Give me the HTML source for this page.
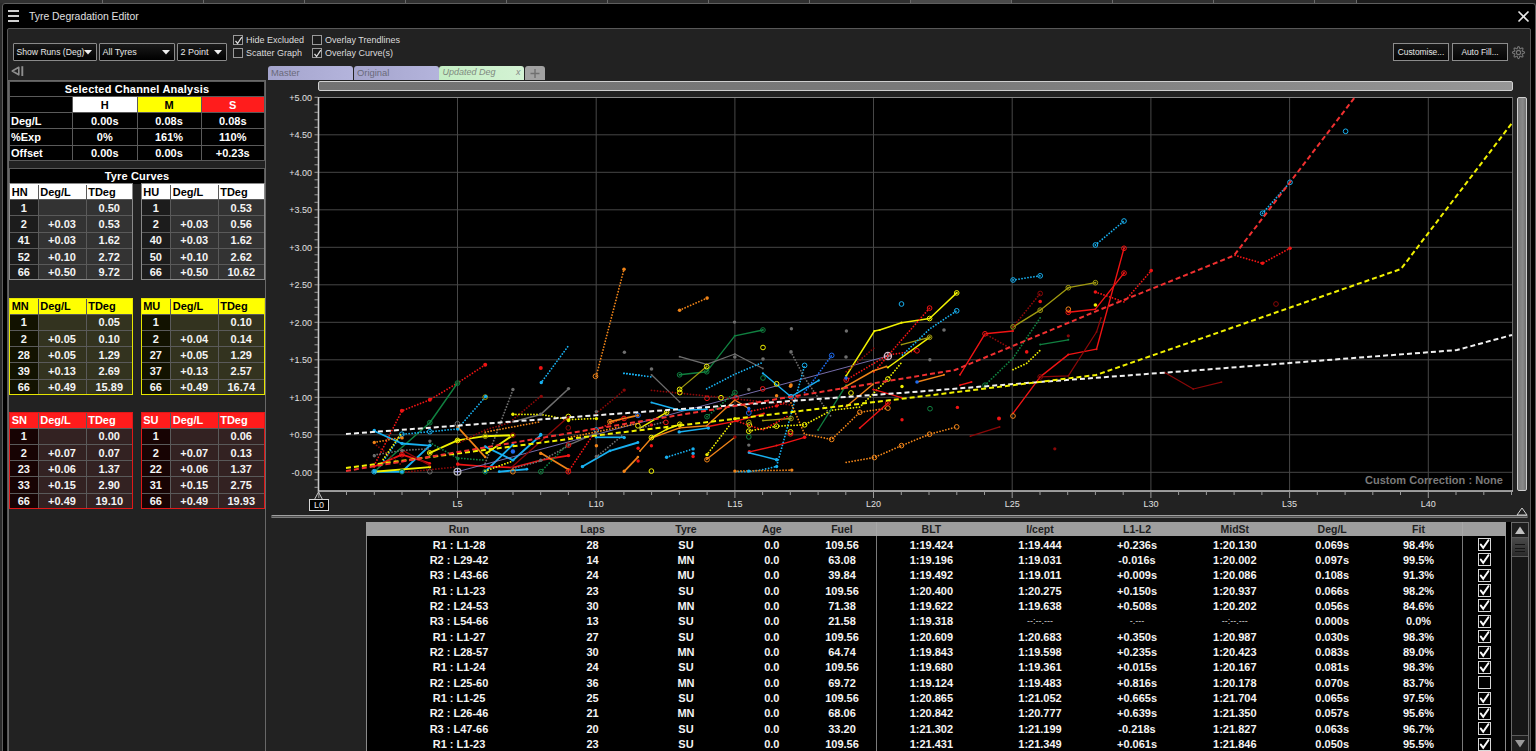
<!DOCTYPE html><html><head><meta charset="utf-8"><style>
*{box-sizing:border-box}
html,body{margin:0;padding:0;width:1536px;height:751px;overflow:hidden;background:#000;font-family:"Liberation Sans",sans-serif}
.ab{position:absolute}
.t{position:absolute;white-space:pre;line-height:1}
</style></head><body>
<div class="ab" style="left:0;top:0;width:1536px;height:751px;background:#2a2a2a"></div>
<div class="ab" style="left:0;top:0;width:1536px;height:3px;background:#303030"></div>
<div class="ab" style="left:102px;top:0;width:1px;height:3px;background:#6a6a6a"></div>
<div class="ab" style="left:203px;top:0;width:1px;height:3px;background:#6a6a6a"></div>
<div class="ab" style="left:304px;top:0;width:1px;height:3px;background:#6a6a6a"></div>
<div class="ab" style="left:405px;top:0;width:1px;height:3px;background:#6a6a6a"></div>
<div class="ab" style="left:506px;top:0;width:1px;height:3px;background:#6a6a6a"></div>
<div class="ab" style="left:607px;top:0;width:1px;height:3px;background:#6a6a6a"></div>
<div class="ab" style="left:708px;top:0;width:1px;height:3px;background:#6a6a6a"></div>
<div class="ab" style="left:809px;top:0;width:1px;height:3px;background:#6a6a6a"></div>
<div class="ab" style="left:910px;top:0;width:1px;height:3px;background:#6a6a6a"></div>
<div class="ab" style="left:1011px;top:0;width:1px;height:3px;background:#6a6a6a"></div>
<div class="ab" style="left:1112px;top:0;width:1px;height:3px;background:#6a6a6a"></div>
<div class="ab" style="left:1213px;top:0;width:1px;height:3px;background:#6a6a6a"></div>
<div class="ab" style="left:1314px;top:0;width:1px;height:3px;background:#6a6a6a"></div>
<div class="ab" style="left:1356px;top:0;width:1px;height:3px;background:#6a6a6a"></div>
<div class="ab" style="left:911px;top:0;width:100px;height:2.5px;background:#4a4a4a"></div>
<div class="ab" style="left:1357px;top:0;width:179px;height:2.5px;background:#1c1c1c"></div>
<div class="ab" style="left:1.5px;top:2.5px;width:1534px;height:760px;background:#000;border:1px solid #5e5e5e;border-radius:3px"></div>
<div class="ab" style="left:8px;top:10px;width:11px;height:2px;background:#d0d0d0"></div>
<div class="ab" style="left:8px;top:15px;width:11px;height:2px;background:#d0d0d0"></div>
<div class="ab" style="left:8px;top:20px;width:11px;height:2px;background:#d0d0d0"></div>
<div class="t" style="left:29px;top:12px;font-size:10.4px;color:#e0e0e0">Tyre Degradation Editor</div>
<svg class="ab" style="left:1517px;top:9.5px" width="13" height="13"><path d="M1.5 1.5L11.5 11.5M11.5 1.5L1.5 11.5" stroke="#e8e8e8" stroke-width="1.6"/></svg>
<div class="ab" style="left:7px;top:28px;width:1524px;height:730px;background:#222;border:1px solid #585858;border-radius:2px"></div>
<div class="ab" style="left:13px;top:43px;width:84px;height:18px;background:linear-gradient(#1a1a1a,#000);border:1px solid #8a8a8a;border-radius:1px"></div>
<div class="t" style="left:16.5px;top:47.5px;font-size:8.6px;color:#e6e6e6">Show Runs (Deg)</div>
<svg class="ab" style="left:84px;top:50px" width="8" height="5"><path d="M0 0H8L4 4.5Z" fill="#f0f0f0"/></svg>
<div class="ab" style="left:99px;top:43px;width:76px;height:18px;background:linear-gradient(#1a1a1a,#000);border:1px solid #8a8a8a;border-radius:1px"></div>
<div class="t" style="left:102.5px;top:47.5px;font-size:9px;color:#e6e6e6">All Tyres</div>
<svg class="ab" style="left:162px;top:50px" width="8" height="5"><path d="M0 0H8L4 4.5Z" fill="#f0f0f0"/></svg>
<div class="ab" style="left:177px;top:43px;width:50px;height:18px;background:linear-gradient(#1a1a1a,#000);border:1px solid #8a8a8a;border-radius:1px"></div>
<div class="t" style="left:180.5px;top:47.5px;font-size:9px;color:#e6e6e6">2 Point</div>
<svg class="ab" style="left:214px;top:50px" width="8" height="5"><path d="M0 0H8L4 4.5Z" fill="#f0f0f0"/></svg>
<div class="ab" style="left:233px;top:35px;width:10px;height:10px;border:1px solid #9a9a9a;background:#1c1c1c"></div>
<svg class="ab" style="left:234px;top:36px" width="9" height="9"><path d="M1.5 4.8L3.6 7.5L7.8 1.2" stroke="#dcdcdc" stroke-width="1.3" fill="none"/></svg>
<div class="t" style="left:246px;top:36px;font-size:9px;color:#dcdcdc">Hide Excluded</div>
<div class="ab" style="left:233px;top:48px;width:10px;height:10px;border:1px solid #9a9a9a;background:#1c1c1c"></div>
<div class="t" style="left:246px;top:49px;font-size:9px;color:#dcdcdc">Scatter Graph</div>
<div class="ab" style="left:312px;top:35px;width:10px;height:10px;border:1px solid #9a9a9a;background:#1c1c1c"></div>
<div class="t" style="left:325px;top:36px;font-size:9px;color:#dcdcdc">Overlay Trendlines</div>
<div class="ab" style="left:312px;top:48px;width:10px;height:10px;border:1px solid #9a9a9a;background:#1c1c1c"></div>
<svg class="ab" style="left:313px;top:49px" width="9" height="9"><path d="M1.5 4.8L3.6 7.5L7.8 1.2" stroke="#dcdcdc" stroke-width="1.3" fill="none"/></svg>
<div class="t" style="left:325px;top:49px;font-size:9px;color:#dcdcdc">Overlay Curve(s)</div>
<svg class="ab" style="left:10px;top:65px" width="14" height="12"><path d="M8.8 2.2L2.3 6L8.8 9.8Z" fill="none" stroke="#8e8e8e" stroke-width="1.6" stroke-linejoin="round"/><path d="M12.3 1.2V11" stroke="#8e8e8e" stroke-width="1.9"/></svg>
<div class="ab" style="left:1393px;top:43px;width:56px;height:18px;background:linear-gradient(#181818,#050505);border:1px solid #8c8c8c"></div>
<div class="t" style="left:1393px;width:56px;text-align:center;top:47.5px;font-size:8.4px;color:#e6e6e6">Customise...</div>
<div class="ab" style="left:1452px;top:43px;width:56px;height:18px;background:linear-gradient(#181818,#050505);border:1px solid #8c8c8c"></div>
<div class="t" style="left:1452px;width:56px;text-align:center;top:47.5px;font-size:8.4px;color:#e6e6e6">Auto Fill...</div>
<svg class="ab" style="left:1510.5px;top:44.7px" width="15" height="15" viewBox="0 0 15 15"><g fill="none" stroke="#767676" stroke-width="1.1"><circle cx="7.5" cy="7.5" r="2.1"/><polyline points="7.50,1.45 7.89,1.60 8.22,2.02 8.48,2.60 8.66,3.18 8.81,3.63 9.01,3.85 9.31,3.83 9.74,3.62 10.28,3.34 10.86,3.12 11.40,3.06 11.78,3.22 11.94,3.60 11.88,4.14 11.66,4.72 11.38,5.26 11.17,5.69 11.15,5.99 11.37,6.19 11.82,6.34 12.40,6.52 12.98,6.78 13.40,7.11 13.55,7.50 13.40,7.89 12.98,8.22 12.40,8.48 11.82,8.66 11.37,8.81 11.15,9.01 11.17,9.31 11.38,9.74 11.66,10.28 11.88,10.86 11.94,11.40 11.78,11.78 11.40,11.94 10.86,11.88 10.28,11.66 9.74,11.38 9.31,11.17 9.01,11.15 8.81,11.37 8.66,11.82 8.48,12.40 8.22,12.98 7.89,13.40 7.50,13.55 7.11,13.40 6.78,12.98 6.52,12.40 6.34,11.82 6.19,11.37 5.99,11.15 5.69,11.17 5.26,11.38 4.72,11.66 4.14,11.88 3.60,11.94 3.22,11.78 3.06,11.40 3.12,10.86 3.34,10.28 3.62,9.74 3.83,9.31 3.85,9.01 3.63,8.81 3.18,8.66 2.60,8.48 2.02,8.22 1.60,7.89 1.45,7.50 1.60,7.11 2.02,6.78 2.60,6.52 3.18,6.34 3.63,6.19 3.85,5.99 3.83,5.69 3.62,5.26 3.34,4.72 3.12,4.14 3.06,3.60 3.22,3.22 3.60,3.06 4.14,3.12 4.72,3.34 5.26,3.62 5.69,3.83 5.99,3.85 6.19,3.63 6.34,3.18 6.52,2.60 6.78,2.02 7.11,1.60 7.50,1.45"/></g></svg>
<div class="ab" style="left:267.5px;top:65.5px;width:85.0px;height:14px;background:linear-gradient(90deg,#a4a4cc,#b4b4dc);border-radius:3px 3px 0 0"></div>
<div class="t" style="left:271.0px;top:67.5px;font-size:9.4px;color:#6a6a7a;">Master</div>
<div class="ab" style="left:353.5px;top:65.5px;width:85.0px;height:14px;background:linear-gradient(90deg,#a4a4cc,#b4b4dc);border-radius:3px 3px 0 0"></div>
<div class="t" style="left:357.0px;top:67.5px;font-size:9.4px;color:#6a6a7a;">Original</div>
<div class="ab" style="left:439px;top:65.5px;width:85px;height:14px;background:linear-gradient(90deg,#c4eec4,#d4f2d4);border-radius:3px 3px 0 0"></div>
<div class="t" style="left:442.5px;top:67.5px;font-size:9px;color:#808a80;font-style:italic;">Updated Deg</div>
<div class="t" style="left:516px;top:68px;font-size:9px;color:#888;font-style:italic">x</div>
<div class="ab" style="left:525px;top:65.5px;width:20px;height:14px;background:#a2a2a2;border-radius:3px 3px 0 0"></div>
<svg class="ab" style="left:529px;top:67px" width="12" height="12"><path d="M6 2V11M1.5 6.5H10.5" stroke="#707070" stroke-width="1.4"/></svg>
<div class="ab" style="left:318px;top:81px;width:1195px;height:10px;background:linear-gradient(90deg,#727272,#7a7a7a 55%,#969696);border:1px solid #d0d0d0;border-radius:2px"></div>
<div class="ab" style="left:8px;top:80px;width:258px;height:675px;border:1px solid #686868;background:#222"></div>
<div class="ab" style="left:9px;top:81px;width:256px;height:80px;background:#000;border:1px solid #5a5a5a"></div>
<div class="t" style="left:9px;width:256px;text-align:center;top:83.5px;font-size:11px;font-weight:bold;color:#fff;letter-spacing:0.2px">Selected Channel Analysis</div>
<div class="ab" style="left:9px;top:96px;width:64px;height:17px;background:#000;border:1px solid #5a5a5a"></div>
<div class="ab" style="left:72px;top:96px;width:65.5px;height:17px;background:#fff;border:1px solid #5a5a5a"></div>
<div class="t" style="left:72px;width:65.5px;text-align:center;top:99.8px;font-size:11px;font-weight:bold;color:#000;letter-spacing:0px">H</div>
<div class="ab" style="left:136.5px;top:96px;width:65.0px;height:17px;background:#ffff00;border:1px solid #5a5a5a"></div>
<div class="t" style="left:136.5px;width:65.0px;text-align:center;top:99.8px;font-size:11px;font-weight:bold;color:#000;letter-spacing:0px">M</div>
<div class="ab" style="left:200.5px;top:96px;width:64.5px;height:17px;background:#ff1c1c;border:1px solid #5a5a5a"></div>
<div class="t" style="left:200.5px;width:64.5px;text-align:center;top:99.8px;font-size:11px;font-weight:bold;color:#fff;letter-spacing:0px">S</div>
<div class="ab" style="left:9px;top:112px;width:64px;height:17px;background:#000;border:1px solid #5a5a5a"></div>
<div class="t" style="left:11px;top:115.8px;font-size:11px;font-weight:bold;color:#fff;letter-spacing:0px">Deg/L</div>
<div class="ab" style="left:72px;top:112px;width:65.5px;height:17px;background:#000;border:1px solid #5a5a5a"></div>
<div class="t" style="left:72px;width:65.5px;text-align:center;top:115.8px;font-size:11px;font-weight:bold;color:#fff;letter-spacing:0px">0.00s</div>
<div class="ab" style="left:136.5px;top:112px;width:65.0px;height:17px;background:#000;border:1px solid #5a5a5a"></div>
<div class="t" style="left:136.5px;width:65.0px;text-align:center;top:115.8px;font-size:11px;font-weight:bold;color:#fff;letter-spacing:0px">0.08s</div>
<div class="ab" style="left:200.5px;top:112px;width:64.5px;height:17px;background:#000;border:1px solid #5a5a5a"></div>
<div class="t" style="left:200.5px;width:64.5px;text-align:center;top:115.8px;font-size:11px;font-weight:bold;color:#fff;letter-spacing:0px">0.08s</div>
<div class="ab" style="left:9px;top:128px;width:64px;height:17.5px;background:#000;border:1px solid #5a5a5a"></div>
<div class="t" style="left:11px;top:132.05px;font-size:11px;font-weight:bold;color:#fff;letter-spacing:0px">%Exp</div>
<div class="ab" style="left:72px;top:128px;width:65.5px;height:17.5px;background:#000;border:1px solid #5a5a5a"></div>
<div class="t" style="left:72px;width:65.5px;text-align:center;top:132.05px;font-size:11px;font-weight:bold;color:#fff;letter-spacing:0px">0%</div>
<div class="ab" style="left:136.5px;top:128px;width:65.0px;height:17.5px;background:#000;border:1px solid #5a5a5a"></div>
<div class="t" style="left:136.5px;width:65.0px;text-align:center;top:132.05px;font-size:11px;font-weight:bold;color:#fff;letter-spacing:0px">161%</div>
<div class="ab" style="left:200.5px;top:128px;width:64.5px;height:17.5px;background:#000;border:1px solid #5a5a5a"></div>
<div class="t" style="left:200.5px;width:64.5px;text-align:center;top:132.05px;font-size:11px;font-weight:bold;color:#fff;letter-spacing:0px">110%</div>
<div class="ab" style="left:9px;top:144.5px;width:64px;height:16.5px;background:#000;border:1px solid #5a5a5a"></div>
<div class="t" style="left:11px;top:148.05px;font-size:11px;font-weight:bold;color:#fff;letter-spacing:0px">Offset</div>
<div class="ab" style="left:72px;top:144.5px;width:65.5px;height:16.5px;background:#000;border:1px solid #5a5a5a"></div>
<div class="t" style="left:72px;width:65.5px;text-align:center;top:148.05px;font-size:11px;font-weight:bold;color:#fff;letter-spacing:0px">0.00s</div>
<div class="ab" style="left:136.5px;top:144.5px;width:65.0px;height:16.5px;background:#000;border:1px solid #5a5a5a"></div>
<div class="t" style="left:136.5px;width:65.0px;text-align:center;top:148.05px;font-size:11px;font-weight:bold;color:#fff;letter-spacing:0px">0.00s</div>
<div class="ab" style="left:200.5px;top:144.5px;width:64.5px;height:16.5px;background:#000;border:1px solid #5a5a5a"></div>
<div class="t" style="left:200.5px;width:64.5px;text-align:center;top:148.05px;font-size:11px;font-weight:bold;color:#fff;letter-spacing:0px">+0.23s</div>
<div class="ab" style="left:9px;top:168px;width:256px;height:15.5px;background:#000;border:1px solid #5a5a5a;border-bottom:none"></div>
<div class="t" style="left:9px;width:256px;text-align:center;top:170.8px;font-size:11px;font-weight:bold;color:#fff;letter-spacing:0.15px">Tyre Curves</div>
<div class="ab" style="left:9px;top:183.8px;width:29.5px;height:17.0px;background:#fff;border:1px solid #5a5a5a"></div>
<div class="t" style="left:11.7px;top:186.8px;font-size:11px;font-weight:bold;color:#000;letter-spacing:0px">HN</div>
<div class="ab" style="left:9px;top:183px;width:29.5px;height:1.5px;background:#fff"></div>
<div class="ab" style="left:37.5px;top:183.8px;width:49.0px;height:17.0px;background:#fff;border:1px solid #5a5a5a"></div>
<div class="t" style="left:40.2px;top:186.8px;font-size:11px;font-weight:bold;color:#000;letter-spacing:0px">Deg/L</div>
<div class="ab" style="left:37.5px;top:183px;width:49.0px;height:1.5px;background:#fff"></div>
<div class="ab" style="left:85.5px;top:183.8px;width:47.5px;height:17.0px;background:#fff;border:1px solid #5a5a5a"></div>
<div class="t" style="left:88.2px;top:186.8px;font-size:11px;font-weight:bold;color:#000;letter-spacing:0px">TDeg</div>
<div class="ab" style="left:85.5px;top:183px;width:47.5px;height:1.5px;background:#fff"></div>
<div class="ab" style="left:9px;top:199.0px;width:29.5px;height:17.25px;background:#1c1c1c;border:1px solid #5a5a5a"></div>
<div class="t" style="left:9px;width:29.5px;text-align:center;top:202.925px;font-size:11px;font-weight:bold;color:#f4f4f4;letter-spacing:0px">1</div>
<div class="ab" style="left:37.5px;top:199.0px;width:49.0px;height:17.25px;background:#333;border:1px solid #5a5a5a"></div>
<div class="ab" style="left:85.5px;top:199.0px;width:47.5px;height:17.25px;background:#333;border:1px solid #5a5a5a"></div>
<div class="t" style="left:85.5px;width:47.5px;text-align:center;top:202.925px;font-size:11px;font-weight:bold;color:#f4f4f4;letter-spacing:0px">0.50</div>
<div class="ab" style="left:9px;top:215.25px;width:29.5px;height:17.25px;background:#1c1c1c;border:1px solid #5a5a5a"></div>
<div class="t" style="left:9px;width:29.5px;text-align:center;top:219.175px;font-size:11px;font-weight:bold;color:#f4f4f4;letter-spacing:0px">2</div>
<div class="ab" style="left:37.5px;top:215.25px;width:49.0px;height:17.25px;background:#333;border:1px solid #5a5a5a"></div>
<div class="t" style="left:37.5px;width:49.0px;text-align:center;top:219.175px;font-size:11px;font-weight:bold;color:#f4f4f4;letter-spacing:0px">+0.03</div>
<div class="ab" style="left:85.5px;top:215.25px;width:47.5px;height:17.25px;background:#333;border:1px solid #5a5a5a"></div>
<div class="t" style="left:85.5px;width:47.5px;text-align:center;top:219.175px;font-size:11px;font-weight:bold;color:#f4f4f4;letter-spacing:0px">0.53</div>
<div class="ab" style="left:9px;top:231.5px;width:29.5px;height:17.25px;background:#1c1c1c;border:1px solid #5a5a5a"></div>
<div class="t" style="left:9px;width:29.5px;text-align:center;top:235.425px;font-size:11px;font-weight:bold;color:#f4f4f4;letter-spacing:0px">41</div>
<div class="ab" style="left:37.5px;top:231.5px;width:49.0px;height:17.25px;background:#333;border:1px solid #5a5a5a"></div>
<div class="t" style="left:37.5px;width:49.0px;text-align:center;top:235.425px;font-size:11px;font-weight:bold;color:#f4f4f4;letter-spacing:0px">+0.03</div>
<div class="ab" style="left:85.5px;top:231.5px;width:47.5px;height:17.25px;background:#333;border:1px solid #5a5a5a"></div>
<div class="t" style="left:85.5px;width:47.5px;text-align:center;top:235.425px;font-size:11px;font-weight:bold;color:#f4f4f4;letter-spacing:0px">1.62</div>
<div class="ab" style="left:9px;top:247.75px;width:29.5px;height:17.25px;background:#1c1c1c;border:1px solid #5a5a5a"></div>
<div class="t" style="left:9px;width:29.5px;text-align:center;top:251.675px;font-size:11px;font-weight:bold;color:#f4f4f4;letter-spacing:0px">52</div>
<div class="ab" style="left:37.5px;top:247.75px;width:49.0px;height:17.25px;background:#333;border:1px solid #5a5a5a"></div>
<div class="t" style="left:37.5px;width:49.0px;text-align:center;top:251.675px;font-size:11px;font-weight:bold;color:#f4f4f4;letter-spacing:0px">+0.10</div>
<div class="ab" style="left:85.5px;top:247.75px;width:47.5px;height:17.25px;background:#333;border:1px solid #5a5a5a"></div>
<div class="t" style="left:85.5px;width:47.5px;text-align:center;top:251.675px;font-size:11px;font-weight:bold;color:#f4f4f4;letter-spacing:0px">2.72</div>
<div class="ab" style="left:9px;top:264.0px;width:29.5px;height:16.25px;background:#1c1c1c;border:1px solid #5a5a5a"></div>
<div class="t" style="left:9px;width:29.5px;text-align:center;top:267.425px;font-size:11px;font-weight:bold;color:#f4f4f4;letter-spacing:0px">66</div>
<div class="ab" style="left:37.5px;top:264.0px;width:49.0px;height:16.25px;background:#333;border:1px solid #5a5a5a"></div>
<div class="t" style="left:37.5px;width:49.0px;text-align:center;top:267.425px;font-size:11px;font-weight:bold;color:#f4f4f4;letter-spacing:0px">+0.50</div>
<div class="ab" style="left:85.5px;top:264.0px;width:47.5px;height:16.25px;background:#333;border:1px solid #5a5a5a"></div>
<div class="t" style="left:85.5px;width:47.5px;text-align:center;top:267.425px;font-size:11px;font-weight:bold;color:#f4f4f4;letter-spacing:0px">9.72</div>
<div class="ab" style="left:9px;top:183px;width:124px;height:97.25px;border:1px solid #8a8a8a"></div>
<div class="ab" style="left:140.5px;top:183.8px;width:30.5px;height:17.0px;background:#fff;border:1px solid #5a5a5a"></div>
<div class="t" style="left:143.2px;top:186.8px;font-size:11px;font-weight:bold;color:#000;letter-spacing:0px">HU</div>
<div class="ab" style="left:140.5px;top:183px;width:30.5px;height:1.5px;background:#fff"></div>
<div class="ab" style="left:170px;top:183.8px;width:48.5px;height:17.0px;background:#fff;border:1px solid #5a5a5a"></div>
<div class="t" style="left:172.7px;top:186.8px;font-size:11px;font-weight:bold;color:#000;letter-spacing:0px">Deg/L</div>
<div class="ab" style="left:170px;top:183px;width:48.5px;height:1.5px;background:#fff"></div>
<div class="ab" style="left:217.5px;top:183.8px;width:47.5px;height:17.0px;background:#fff;border:1px solid #5a5a5a"></div>
<div class="t" style="left:220.2px;top:186.8px;font-size:11px;font-weight:bold;color:#000;letter-spacing:0px">TDeg</div>
<div class="ab" style="left:217.5px;top:183px;width:47.5px;height:1.5px;background:#fff"></div>
<div class="ab" style="left:140.5px;top:199.0px;width:30.5px;height:17.25px;background:#1c1c1c;border:1px solid #5a5a5a"></div>
<div class="t" style="left:140.5px;width:30.5px;text-align:center;top:202.925px;font-size:11px;font-weight:bold;color:#f4f4f4;letter-spacing:0px">1</div>
<div class="ab" style="left:170px;top:199.0px;width:48.5px;height:17.25px;background:#333;border:1px solid #5a5a5a"></div>
<div class="ab" style="left:217.5px;top:199.0px;width:47.5px;height:17.25px;background:#333;border:1px solid #5a5a5a"></div>
<div class="t" style="left:217.5px;width:47.5px;text-align:center;top:202.925px;font-size:11px;font-weight:bold;color:#f4f4f4;letter-spacing:0px">0.53</div>
<div class="ab" style="left:140.5px;top:215.25px;width:30.5px;height:17.25px;background:#1c1c1c;border:1px solid #5a5a5a"></div>
<div class="t" style="left:140.5px;width:30.5px;text-align:center;top:219.175px;font-size:11px;font-weight:bold;color:#f4f4f4;letter-spacing:0px">2</div>
<div class="ab" style="left:170px;top:215.25px;width:48.5px;height:17.25px;background:#333;border:1px solid #5a5a5a"></div>
<div class="t" style="left:170px;width:48.5px;text-align:center;top:219.175px;font-size:11px;font-weight:bold;color:#f4f4f4;letter-spacing:0px">+0.03</div>
<div class="ab" style="left:217.5px;top:215.25px;width:47.5px;height:17.25px;background:#333;border:1px solid #5a5a5a"></div>
<div class="t" style="left:217.5px;width:47.5px;text-align:center;top:219.175px;font-size:11px;font-weight:bold;color:#f4f4f4;letter-spacing:0px">0.56</div>
<div class="ab" style="left:140.5px;top:231.5px;width:30.5px;height:17.25px;background:#1c1c1c;border:1px solid #5a5a5a"></div>
<div class="t" style="left:140.5px;width:30.5px;text-align:center;top:235.425px;font-size:11px;font-weight:bold;color:#f4f4f4;letter-spacing:0px">40</div>
<div class="ab" style="left:170px;top:231.5px;width:48.5px;height:17.25px;background:#333;border:1px solid #5a5a5a"></div>
<div class="t" style="left:170px;width:48.5px;text-align:center;top:235.425px;font-size:11px;font-weight:bold;color:#f4f4f4;letter-spacing:0px">+0.03</div>
<div class="ab" style="left:217.5px;top:231.5px;width:47.5px;height:17.25px;background:#333;border:1px solid #5a5a5a"></div>
<div class="t" style="left:217.5px;width:47.5px;text-align:center;top:235.425px;font-size:11px;font-weight:bold;color:#f4f4f4;letter-spacing:0px">1.62</div>
<div class="ab" style="left:140.5px;top:247.75px;width:30.5px;height:17.25px;background:#1c1c1c;border:1px solid #5a5a5a"></div>
<div class="t" style="left:140.5px;width:30.5px;text-align:center;top:251.675px;font-size:11px;font-weight:bold;color:#f4f4f4;letter-spacing:0px">50</div>
<div class="ab" style="left:170px;top:247.75px;width:48.5px;height:17.25px;background:#333;border:1px solid #5a5a5a"></div>
<div class="t" style="left:170px;width:48.5px;text-align:center;top:251.675px;font-size:11px;font-weight:bold;color:#f4f4f4;letter-spacing:0px">+0.10</div>
<div class="ab" style="left:217.5px;top:247.75px;width:47.5px;height:17.25px;background:#333;border:1px solid #5a5a5a"></div>
<div class="t" style="left:217.5px;width:47.5px;text-align:center;top:251.675px;font-size:11px;font-weight:bold;color:#f4f4f4;letter-spacing:0px">2.62</div>
<div class="ab" style="left:140.5px;top:264.0px;width:30.5px;height:16.25px;background:#1c1c1c;border:1px solid #5a5a5a"></div>
<div class="t" style="left:140.5px;width:30.5px;text-align:center;top:267.425px;font-size:11px;font-weight:bold;color:#f4f4f4;letter-spacing:0px">66</div>
<div class="ab" style="left:170px;top:264.0px;width:48.5px;height:16.25px;background:#333;border:1px solid #5a5a5a"></div>
<div class="t" style="left:170px;width:48.5px;text-align:center;top:267.425px;font-size:11px;font-weight:bold;color:#f4f4f4;letter-spacing:0px">+0.50</div>
<div class="ab" style="left:217.5px;top:264.0px;width:47.5px;height:16.25px;background:#333;border:1px solid #5a5a5a"></div>
<div class="t" style="left:217.5px;width:47.5px;text-align:center;top:267.425px;font-size:11px;font-weight:bold;color:#f4f4f4;letter-spacing:0px">10.62</div>
<div class="ab" style="left:140.5px;top:183px;width:124.5px;height:97.25px;border:1px solid #8a8a8a"></div>
<div class="ab" style="left:9px;top:298.3px;width:29.5px;height:17.0px;background:#ffff00;border:1px solid #5a5a5a"></div>
<div class="t" style="left:11.7px;top:301.3px;font-size:11px;font-weight:bold;color:#000;letter-spacing:0px">MN</div>
<div class="ab" style="left:9px;top:297.5px;width:29.5px;height:1.5px;background:#ffff00"></div>
<div class="ab" style="left:37.5px;top:298.3px;width:49.0px;height:17.0px;background:#ffff00;border:1px solid #5a5a5a"></div>
<div class="t" style="left:40.2px;top:301.3px;font-size:11px;font-weight:bold;color:#000;letter-spacing:0px">Deg/L</div>
<div class="ab" style="left:37.5px;top:297.5px;width:49.0px;height:1.5px;background:#ffff00"></div>
<div class="ab" style="left:85.5px;top:298.3px;width:47.5px;height:17.0px;background:#ffff00;border:1px solid #5a5a5a"></div>
<div class="t" style="left:88.2px;top:301.3px;font-size:11px;font-weight:bold;color:#000;letter-spacing:0px">TDeg</div>
<div class="ab" style="left:85.5px;top:297.5px;width:47.5px;height:1.5px;background:#ffff00"></div>
<div class="ab" style="left:9px;top:313.5px;width:29.5px;height:17.25px;background:#121200;border:1px solid #5a5a5a"></div>
<div class="t" style="left:9px;width:29.5px;text-align:center;top:317.425px;font-size:11px;font-weight:bold;color:#f4f4f4;letter-spacing:0px">1</div>
<div class="ab" style="left:37.5px;top:313.5px;width:49.0px;height:17.25px;background:#33331f;border:1px solid #5a5a5a"></div>
<div class="ab" style="left:85.5px;top:313.5px;width:47.5px;height:17.25px;background:#33331f;border:1px solid #5a5a5a"></div>
<div class="t" style="left:85.5px;width:47.5px;text-align:center;top:317.425px;font-size:11px;font-weight:bold;color:#f4f4f4;letter-spacing:0px">0.05</div>
<div class="ab" style="left:9px;top:329.75px;width:29.5px;height:17.25px;background:#121200;border:1px solid #5a5a5a"></div>
<div class="t" style="left:9px;width:29.5px;text-align:center;top:333.675px;font-size:11px;font-weight:bold;color:#f4f4f4;letter-spacing:0px">2</div>
<div class="ab" style="left:37.5px;top:329.75px;width:49.0px;height:17.25px;background:#33331f;border:1px solid #5a5a5a"></div>
<div class="t" style="left:37.5px;width:49.0px;text-align:center;top:333.675px;font-size:11px;font-weight:bold;color:#f4f4f4;letter-spacing:0px">+0.05</div>
<div class="ab" style="left:85.5px;top:329.75px;width:47.5px;height:17.25px;background:#33331f;border:1px solid #5a5a5a"></div>
<div class="t" style="left:85.5px;width:47.5px;text-align:center;top:333.675px;font-size:11px;font-weight:bold;color:#f4f4f4;letter-spacing:0px">0.10</div>
<div class="ab" style="left:9px;top:346.0px;width:29.5px;height:17.25px;background:#121200;border:1px solid #5a5a5a"></div>
<div class="t" style="left:9px;width:29.5px;text-align:center;top:349.925px;font-size:11px;font-weight:bold;color:#f4f4f4;letter-spacing:0px">28</div>
<div class="ab" style="left:37.5px;top:346.0px;width:49.0px;height:17.25px;background:#33331f;border:1px solid #5a5a5a"></div>
<div class="t" style="left:37.5px;width:49.0px;text-align:center;top:349.925px;font-size:11px;font-weight:bold;color:#f4f4f4;letter-spacing:0px">+0.05</div>
<div class="ab" style="left:85.5px;top:346.0px;width:47.5px;height:17.25px;background:#33331f;border:1px solid #5a5a5a"></div>
<div class="t" style="left:85.5px;width:47.5px;text-align:center;top:349.925px;font-size:11px;font-weight:bold;color:#f4f4f4;letter-spacing:0px">1.29</div>
<div class="ab" style="left:9px;top:362.25px;width:29.5px;height:17.25px;background:#121200;border:1px solid #5a5a5a"></div>
<div class="t" style="left:9px;width:29.5px;text-align:center;top:366.175px;font-size:11px;font-weight:bold;color:#f4f4f4;letter-spacing:0px">39</div>
<div class="ab" style="left:37.5px;top:362.25px;width:49.0px;height:17.25px;background:#33331f;border:1px solid #5a5a5a"></div>
<div class="t" style="left:37.5px;width:49.0px;text-align:center;top:366.175px;font-size:11px;font-weight:bold;color:#f4f4f4;letter-spacing:0px">+0.13</div>
<div class="ab" style="left:85.5px;top:362.25px;width:47.5px;height:17.25px;background:#33331f;border:1px solid #5a5a5a"></div>
<div class="t" style="left:85.5px;width:47.5px;text-align:center;top:366.175px;font-size:11px;font-weight:bold;color:#f4f4f4;letter-spacing:0px">2.69</div>
<div class="ab" style="left:9px;top:378.5px;width:29.5px;height:16.25px;background:#121200;border:1px solid #5a5a5a"></div>
<div class="t" style="left:9px;width:29.5px;text-align:center;top:381.925px;font-size:11px;font-weight:bold;color:#f4f4f4;letter-spacing:0px">66</div>
<div class="ab" style="left:37.5px;top:378.5px;width:49.0px;height:16.25px;background:#33331f;border:1px solid #5a5a5a"></div>
<div class="t" style="left:37.5px;width:49.0px;text-align:center;top:381.925px;font-size:11px;font-weight:bold;color:#f4f4f4;letter-spacing:0px">+0.49</div>
<div class="ab" style="left:85.5px;top:378.5px;width:47.5px;height:16.25px;background:#33331f;border:1px solid #5a5a5a"></div>
<div class="t" style="left:85.5px;width:47.5px;text-align:center;top:381.925px;font-size:11px;font-weight:bold;color:#f4f4f4;letter-spacing:0px">15.89</div>
<div class="ab" style="left:9px;top:297.5px;width:124px;height:97.25px;border:1px solid #e6e600"></div>
<div class="ab" style="left:140.5px;top:298.3px;width:30.5px;height:17.0px;background:#ffff00;border:1px solid #5a5a5a"></div>
<div class="t" style="left:143.2px;top:301.3px;font-size:11px;font-weight:bold;color:#000;letter-spacing:0px">MU</div>
<div class="ab" style="left:140.5px;top:297.5px;width:30.5px;height:1.5px;background:#ffff00"></div>
<div class="ab" style="left:170px;top:298.3px;width:48.5px;height:17.0px;background:#ffff00;border:1px solid #5a5a5a"></div>
<div class="t" style="left:172.7px;top:301.3px;font-size:11px;font-weight:bold;color:#000;letter-spacing:0px">Deg/L</div>
<div class="ab" style="left:170px;top:297.5px;width:48.5px;height:1.5px;background:#ffff00"></div>
<div class="ab" style="left:217.5px;top:298.3px;width:47.5px;height:17.0px;background:#ffff00;border:1px solid #5a5a5a"></div>
<div class="t" style="left:220.2px;top:301.3px;font-size:11px;font-weight:bold;color:#000;letter-spacing:0px">TDeg</div>
<div class="ab" style="left:217.5px;top:297.5px;width:47.5px;height:1.5px;background:#ffff00"></div>
<div class="ab" style="left:140.5px;top:313.5px;width:30.5px;height:17.25px;background:#121200;border:1px solid #5a5a5a"></div>
<div class="t" style="left:140.5px;width:30.5px;text-align:center;top:317.425px;font-size:11px;font-weight:bold;color:#f4f4f4;letter-spacing:0px">1</div>
<div class="ab" style="left:170px;top:313.5px;width:48.5px;height:17.25px;background:#33331f;border:1px solid #5a5a5a"></div>
<div class="ab" style="left:217.5px;top:313.5px;width:47.5px;height:17.25px;background:#33331f;border:1px solid #5a5a5a"></div>
<div class="t" style="left:217.5px;width:47.5px;text-align:center;top:317.425px;font-size:11px;font-weight:bold;color:#f4f4f4;letter-spacing:0px">0.10</div>
<div class="ab" style="left:140.5px;top:329.75px;width:30.5px;height:17.25px;background:#121200;border:1px solid #5a5a5a"></div>
<div class="t" style="left:140.5px;width:30.5px;text-align:center;top:333.675px;font-size:11px;font-weight:bold;color:#f4f4f4;letter-spacing:0px">2</div>
<div class="ab" style="left:170px;top:329.75px;width:48.5px;height:17.25px;background:#33331f;border:1px solid #5a5a5a"></div>
<div class="t" style="left:170px;width:48.5px;text-align:center;top:333.675px;font-size:11px;font-weight:bold;color:#f4f4f4;letter-spacing:0px">+0.04</div>
<div class="ab" style="left:217.5px;top:329.75px;width:47.5px;height:17.25px;background:#33331f;border:1px solid #5a5a5a"></div>
<div class="t" style="left:217.5px;width:47.5px;text-align:center;top:333.675px;font-size:11px;font-weight:bold;color:#f4f4f4;letter-spacing:0px">0.14</div>
<div class="ab" style="left:140.5px;top:346.0px;width:30.5px;height:17.25px;background:#121200;border:1px solid #5a5a5a"></div>
<div class="t" style="left:140.5px;width:30.5px;text-align:center;top:349.925px;font-size:11px;font-weight:bold;color:#f4f4f4;letter-spacing:0px">27</div>
<div class="ab" style="left:170px;top:346.0px;width:48.5px;height:17.25px;background:#33331f;border:1px solid #5a5a5a"></div>
<div class="t" style="left:170px;width:48.5px;text-align:center;top:349.925px;font-size:11px;font-weight:bold;color:#f4f4f4;letter-spacing:0px">+0.05</div>
<div class="ab" style="left:217.5px;top:346.0px;width:47.5px;height:17.25px;background:#33331f;border:1px solid #5a5a5a"></div>
<div class="t" style="left:217.5px;width:47.5px;text-align:center;top:349.925px;font-size:11px;font-weight:bold;color:#f4f4f4;letter-spacing:0px">1.29</div>
<div class="ab" style="left:140.5px;top:362.25px;width:30.5px;height:17.25px;background:#121200;border:1px solid #5a5a5a"></div>
<div class="t" style="left:140.5px;width:30.5px;text-align:center;top:366.175px;font-size:11px;font-weight:bold;color:#f4f4f4;letter-spacing:0px">37</div>
<div class="ab" style="left:170px;top:362.25px;width:48.5px;height:17.25px;background:#33331f;border:1px solid #5a5a5a"></div>
<div class="t" style="left:170px;width:48.5px;text-align:center;top:366.175px;font-size:11px;font-weight:bold;color:#f4f4f4;letter-spacing:0px">+0.13</div>
<div class="ab" style="left:217.5px;top:362.25px;width:47.5px;height:17.25px;background:#33331f;border:1px solid #5a5a5a"></div>
<div class="t" style="left:217.5px;width:47.5px;text-align:center;top:366.175px;font-size:11px;font-weight:bold;color:#f4f4f4;letter-spacing:0px">2.57</div>
<div class="ab" style="left:140.5px;top:378.5px;width:30.5px;height:16.25px;background:#121200;border:1px solid #5a5a5a"></div>
<div class="t" style="left:140.5px;width:30.5px;text-align:center;top:381.925px;font-size:11px;font-weight:bold;color:#f4f4f4;letter-spacing:0px">66</div>
<div class="ab" style="left:170px;top:378.5px;width:48.5px;height:16.25px;background:#33331f;border:1px solid #5a5a5a"></div>
<div class="t" style="left:170px;width:48.5px;text-align:center;top:381.925px;font-size:11px;font-weight:bold;color:#f4f4f4;letter-spacing:0px">+0.49</div>
<div class="ab" style="left:217.5px;top:378.5px;width:47.5px;height:16.25px;background:#33331f;border:1px solid #5a5a5a"></div>
<div class="t" style="left:217.5px;width:47.5px;text-align:center;top:381.925px;font-size:11px;font-weight:bold;color:#f4f4f4;letter-spacing:0px">16.74</div>
<div class="ab" style="left:140.5px;top:297.5px;width:124.5px;height:97.25px;border:1px solid #e6e600"></div>
<div class="ab" style="left:9px;top:412.3px;width:29.5px;height:17.0px;background:#ff1c1c;border:1px solid #5a5a5a"></div>
<div class="t" style="left:11.7px;top:415.3px;font-size:11px;font-weight:bold;color:#fff;letter-spacing:0px">SN</div>
<div class="ab" style="left:9px;top:411.5px;width:29.5px;height:1.5px;background:#ff1c1c"></div>
<div class="ab" style="left:37.5px;top:412.3px;width:49.0px;height:17.0px;background:#ff1c1c;border:1px solid #5a5a5a"></div>
<div class="t" style="left:40.2px;top:415.3px;font-size:11px;font-weight:bold;color:#fff;letter-spacing:0px">Deg/L</div>
<div class="ab" style="left:37.5px;top:411.5px;width:49.0px;height:1.5px;background:#ff1c1c"></div>
<div class="ab" style="left:85.5px;top:412.3px;width:47.5px;height:17.0px;background:#ff1c1c;border:1px solid #5a5a5a"></div>
<div class="t" style="left:88.2px;top:415.3px;font-size:11px;font-weight:bold;color:#fff;letter-spacing:0px">TDeg</div>
<div class="ab" style="left:85.5px;top:411.5px;width:47.5px;height:1.5px;background:#ff1c1c"></div>
<div class="ab" style="left:9px;top:427.5px;width:29.5px;height:17.25px;background:#170303;border:1px solid #5a5a5a"></div>
<div class="t" style="left:9px;width:29.5px;text-align:center;top:431.425px;font-size:11px;font-weight:bold;color:#f4f4f4;letter-spacing:0px">1</div>
<div class="ab" style="left:37.5px;top:427.5px;width:49.0px;height:17.25px;background:#332222;border:1px solid #5a5a5a"></div>
<div class="ab" style="left:85.5px;top:427.5px;width:47.5px;height:17.25px;background:#332222;border:1px solid #5a5a5a"></div>
<div class="t" style="left:85.5px;width:47.5px;text-align:center;top:431.425px;font-size:11px;font-weight:bold;color:#f4f4f4;letter-spacing:0px">0.00</div>
<div class="ab" style="left:9px;top:443.75px;width:29.5px;height:17.25px;background:#170303;border:1px solid #5a5a5a"></div>
<div class="t" style="left:9px;width:29.5px;text-align:center;top:447.675px;font-size:11px;font-weight:bold;color:#f4f4f4;letter-spacing:0px">2</div>
<div class="ab" style="left:37.5px;top:443.75px;width:49.0px;height:17.25px;background:#332222;border:1px solid #5a5a5a"></div>
<div class="t" style="left:37.5px;width:49.0px;text-align:center;top:447.675px;font-size:11px;font-weight:bold;color:#f4f4f4;letter-spacing:0px">+0.07</div>
<div class="ab" style="left:85.5px;top:443.75px;width:47.5px;height:17.25px;background:#332222;border:1px solid #5a5a5a"></div>
<div class="t" style="left:85.5px;width:47.5px;text-align:center;top:447.675px;font-size:11px;font-weight:bold;color:#f4f4f4;letter-spacing:0px">0.07</div>
<div class="ab" style="left:9px;top:460.0px;width:29.5px;height:17.25px;background:#170303;border:1px solid #5a5a5a"></div>
<div class="t" style="left:9px;width:29.5px;text-align:center;top:463.925px;font-size:11px;font-weight:bold;color:#f4f4f4;letter-spacing:0px">23</div>
<div class="ab" style="left:37.5px;top:460.0px;width:49.0px;height:17.25px;background:#332222;border:1px solid #5a5a5a"></div>
<div class="t" style="left:37.5px;width:49.0px;text-align:center;top:463.925px;font-size:11px;font-weight:bold;color:#f4f4f4;letter-spacing:0px">+0.06</div>
<div class="ab" style="left:85.5px;top:460.0px;width:47.5px;height:17.25px;background:#332222;border:1px solid #5a5a5a"></div>
<div class="t" style="left:85.5px;width:47.5px;text-align:center;top:463.925px;font-size:11px;font-weight:bold;color:#f4f4f4;letter-spacing:0px">1.37</div>
<div class="ab" style="left:9px;top:476.25px;width:29.5px;height:17.25px;background:#170303;border:1px solid #5a5a5a"></div>
<div class="t" style="left:9px;width:29.5px;text-align:center;top:480.175px;font-size:11px;font-weight:bold;color:#f4f4f4;letter-spacing:0px">33</div>
<div class="ab" style="left:37.5px;top:476.25px;width:49.0px;height:17.25px;background:#332222;border:1px solid #5a5a5a"></div>
<div class="t" style="left:37.5px;width:49.0px;text-align:center;top:480.175px;font-size:11px;font-weight:bold;color:#f4f4f4;letter-spacing:0px">+0.15</div>
<div class="ab" style="left:85.5px;top:476.25px;width:47.5px;height:17.25px;background:#332222;border:1px solid #5a5a5a"></div>
<div class="t" style="left:85.5px;width:47.5px;text-align:center;top:480.175px;font-size:11px;font-weight:bold;color:#f4f4f4;letter-spacing:0px">2.90</div>
<div class="ab" style="left:9px;top:492.5px;width:29.5px;height:16.25px;background:#170303;border:1px solid #5a5a5a"></div>
<div class="t" style="left:9px;width:29.5px;text-align:center;top:495.925px;font-size:11px;font-weight:bold;color:#f4f4f4;letter-spacing:0px">66</div>
<div class="ab" style="left:37.5px;top:492.5px;width:49.0px;height:16.25px;background:#332222;border:1px solid #5a5a5a"></div>
<div class="t" style="left:37.5px;width:49.0px;text-align:center;top:495.925px;font-size:11px;font-weight:bold;color:#f4f4f4;letter-spacing:0px">+0.49</div>
<div class="ab" style="left:85.5px;top:492.5px;width:47.5px;height:16.25px;background:#332222;border:1px solid #5a5a5a"></div>
<div class="t" style="left:85.5px;width:47.5px;text-align:center;top:495.925px;font-size:11px;font-weight:bold;color:#f4f4f4;letter-spacing:0px">19.10</div>
<div class="ab" style="left:9px;top:411.5px;width:124px;height:97.25px;border:1px solid #e01818"></div>
<div class="ab" style="left:140.5px;top:412.3px;width:30.5px;height:17.0px;background:#ff1c1c;border:1px solid #5a5a5a"></div>
<div class="t" style="left:143.2px;top:415.3px;font-size:11px;font-weight:bold;color:#fff;letter-spacing:0px">SU</div>
<div class="ab" style="left:140.5px;top:411.5px;width:30.5px;height:1.5px;background:#ff1c1c"></div>
<div class="ab" style="left:170px;top:412.3px;width:48.5px;height:17.0px;background:#ff1c1c;border:1px solid #5a5a5a"></div>
<div class="t" style="left:172.7px;top:415.3px;font-size:11px;font-weight:bold;color:#fff;letter-spacing:0px">Deg/L</div>
<div class="ab" style="left:170px;top:411.5px;width:48.5px;height:1.5px;background:#ff1c1c"></div>
<div class="ab" style="left:217.5px;top:412.3px;width:47.5px;height:17.0px;background:#ff1c1c;border:1px solid #5a5a5a"></div>
<div class="t" style="left:220.2px;top:415.3px;font-size:11px;font-weight:bold;color:#fff;letter-spacing:0px">TDeg</div>
<div class="ab" style="left:217.5px;top:411.5px;width:47.5px;height:1.5px;background:#ff1c1c"></div>
<div class="ab" style="left:140.5px;top:427.5px;width:30.5px;height:17.25px;background:#170303;border:1px solid #5a5a5a"></div>
<div class="t" style="left:140.5px;width:30.5px;text-align:center;top:431.425px;font-size:11px;font-weight:bold;color:#f4f4f4;letter-spacing:0px">1</div>
<div class="ab" style="left:170px;top:427.5px;width:48.5px;height:17.25px;background:#332222;border:1px solid #5a5a5a"></div>
<div class="ab" style="left:217.5px;top:427.5px;width:47.5px;height:17.25px;background:#332222;border:1px solid #5a5a5a"></div>
<div class="t" style="left:217.5px;width:47.5px;text-align:center;top:431.425px;font-size:11px;font-weight:bold;color:#f4f4f4;letter-spacing:0px">0.06</div>
<div class="ab" style="left:140.5px;top:443.75px;width:30.5px;height:17.25px;background:#170303;border:1px solid #5a5a5a"></div>
<div class="t" style="left:140.5px;width:30.5px;text-align:center;top:447.675px;font-size:11px;font-weight:bold;color:#f4f4f4;letter-spacing:0px">2</div>
<div class="ab" style="left:170px;top:443.75px;width:48.5px;height:17.25px;background:#332222;border:1px solid #5a5a5a"></div>
<div class="t" style="left:170px;width:48.5px;text-align:center;top:447.675px;font-size:11px;font-weight:bold;color:#f4f4f4;letter-spacing:0px">+0.07</div>
<div class="ab" style="left:217.5px;top:443.75px;width:47.5px;height:17.25px;background:#332222;border:1px solid #5a5a5a"></div>
<div class="t" style="left:217.5px;width:47.5px;text-align:center;top:447.675px;font-size:11px;font-weight:bold;color:#f4f4f4;letter-spacing:0px">0.13</div>
<div class="ab" style="left:140.5px;top:460.0px;width:30.5px;height:17.25px;background:#170303;border:1px solid #5a5a5a"></div>
<div class="t" style="left:140.5px;width:30.5px;text-align:center;top:463.925px;font-size:11px;font-weight:bold;color:#f4f4f4;letter-spacing:0px">22</div>
<div class="ab" style="left:170px;top:460.0px;width:48.5px;height:17.25px;background:#332222;border:1px solid #5a5a5a"></div>
<div class="t" style="left:170px;width:48.5px;text-align:center;top:463.925px;font-size:11px;font-weight:bold;color:#f4f4f4;letter-spacing:0px">+0.06</div>
<div class="ab" style="left:217.5px;top:460.0px;width:47.5px;height:17.25px;background:#332222;border:1px solid #5a5a5a"></div>
<div class="t" style="left:217.5px;width:47.5px;text-align:center;top:463.925px;font-size:11px;font-weight:bold;color:#f4f4f4;letter-spacing:0px">1.37</div>
<div class="ab" style="left:140.5px;top:476.25px;width:30.5px;height:17.25px;background:#170303;border:1px solid #5a5a5a"></div>
<div class="t" style="left:140.5px;width:30.5px;text-align:center;top:480.175px;font-size:11px;font-weight:bold;color:#f4f4f4;letter-spacing:0px">31</div>
<div class="ab" style="left:170px;top:476.25px;width:48.5px;height:17.25px;background:#332222;border:1px solid #5a5a5a"></div>
<div class="t" style="left:170px;width:48.5px;text-align:center;top:480.175px;font-size:11px;font-weight:bold;color:#f4f4f4;letter-spacing:0px">+0.15</div>
<div class="ab" style="left:217.5px;top:476.25px;width:47.5px;height:17.25px;background:#332222;border:1px solid #5a5a5a"></div>
<div class="t" style="left:217.5px;width:47.5px;text-align:center;top:480.175px;font-size:11px;font-weight:bold;color:#f4f4f4;letter-spacing:0px">2.75</div>
<div class="ab" style="left:140.5px;top:492.5px;width:30.5px;height:16.25px;background:#170303;border:1px solid #5a5a5a"></div>
<div class="t" style="left:140.5px;width:30.5px;text-align:center;top:495.925px;font-size:11px;font-weight:bold;color:#f4f4f4;letter-spacing:0px">66</div>
<div class="ab" style="left:170px;top:492.5px;width:48.5px;height:16.25px;background:#332222;border:1px solid #5a5a5a"></div>
<div class="t" style="left:170px;width:48.5px;text-align:center;top:495.925px;font-size:11px;font-weight:bold;color:#f4f4f4;letter-spacing:0px">+0.49</div>
<div class="ab" style="left:217.5px;top:492.5px;width:47.5px;height:16.25px;background:#332222;border:1px solid #5a5a5a"></div>
<div class="t" style="left:217.5px;width:47.5px;text-align:center;top:495.925px;font-size:11px;font-weight:bold;color:#f4f4f4;letter-spacing:0px">19.93</div>
<div class="ab" style="left:140.5px;top:411.5px;width:124.5px;height:97.25px;border:1px solid #e01818"></div>
<div class="ab" style="left:319px;top:97px;width:1194px;height:394px;background:#000"></div>
<svg class="ab" style="left:0;top:0" width="1536" height="751">
<line x1="319" y1="134.8" x2="1512.5" y2="134.8" stroke="#474747" stroke-width="1"/>
<line x1="319" y1="172.3" x2="1512.5" y2="172.3" stroke="#474747" stroke-width="1"/>
<line x1="319" y1="209.8" x2="1512.5" y2="209.8" stroke="#474747" stroke-width="1"/>
<line x1="319" y1="247.3" x2="1512.5" y2="247.3" stroke="#474747" stroke-width="1"/>
<line x1="319" y1="284.8" x2="1512.5" y2="284.8" stroke="#474747" stroke-width="1"/>
<line x1="319" y1="322.3" x2="1512.5" y2="322.3" stroke="#474747" stroke-width="1"/>
<line x1="319" y1="359.8" x2="1512.5" y2="359.8" stroke="#474747" stroke-width="1"/>
<line x1="319" y1="397.3" x2="1512.5" y2="397.3" stroke="#474747" stroke-width="1"/>
<line x1="319" y1="434.8" x2="1512.5" y2="434.8" stroke="#474747" stroke-width="1"/>
<line x1="319" y1="472.3" x2="1512.5" y2="472.3" stroke="#474747" stroke-width="1"/>
<line x1="457.5" y1="97" x2="457.5" y2="491" stroke="#474747" stroke-width="1"/>
<line x1="596.2" y1="97" x2="596.2" y2="491" stroke="#474747" stroke-width="1"/>
<line x1="734.9" y1="97" x2="734.9" y2="491" stroke="#474747" stroke-width="1"/>
<line x1="873.5" y1="97" x2="873.5" y2="491" stroke="#474747" stroke-width="1"/>
<line x1="1012.2" y1="97" x2="1012.2" y2="491" stroke="#474747" stroke-width="1"/>
<line x1="1150.9" y1="97" x2="1150.9" y2="491" stroke="#474747" stroke-width="1"/>
<line x1="1289.6" y1="97" x2="1289.6" y2="491" stroke="#474747" stroke-width="1"/>
<line x1="1428.3" y1="97" x2="1428.3" y2="491" stroke="#474747" stroke-width="1"/>
<line x1="319" y1="97.5" x2="1512.5" y2="97.5" stroke="#8a8a8a" stroke-width="1.2"/>
<line x1="1512.5" y1="97" x2="1512.5" y2="491" stroke="#6a6a6a" stroke-width="1"/>
<line x1="318.5" y1="97" x2="318.5" y2="492" stroke="#c8c8c8" stroke-width="1.6"/>
<line x1="318" y1="491" x2="1513" y2="491" stroke="#c8c8c8" stroke-width="1.6"/>
<line x1="314.5" y1="97.3" x2="318" y2="97.3" stroke="#9a9a9a" stroke-width="1"/>
<line x1="314.5" y1="104.8" x2="318" y2="104.8" stroke="#9a9a9a" stroke-width="1"/>
<line x1="314.5" y1="112.3" x2="318" y2="112.3" stroke="#9a9a9a" stroke-width="1"/>
<line x1="314.5" y1="119.8" x2="318" y2="119.8" stroke="#9a9a9a" stroke-width="1"/>
<line x1="314.5" y1="127.3" x2="318" y2="127.3" stroke="#9a9a9a" stroke-width="1"/>
<line x1="314.5" y1="134.8" x2="318" y2="134.8" stroke="#9a9a9a" stroke-width="1"/>
<line x1="314.5" y1="142.3" x2="318" y2="142.3" stroke="#9a9a9a" stroke-width="1"/>
<line x1="314.5" y1="149.8" x2="318" y2="149.8" stroke="#9a9a9a" stroke-width="1"/>
<line x1="314.5" y1="157.3" x2="318" y2="157.3" stroke="#9a9a9a" stroke-width="1"/>
<line x1="314.5" y1="164.8" x2="318" y2="164.8" stroke="#9a9a9a" stroke-width="1"/>
<line x1="314.5" y1="172.3" x2="318" y2="172.3" stroke="#9a9a9a" stroke-width="1"/>
<line x1="314.5" y1="179.8" x2="318" y2="179.8" stroke="#9a9a9a" stroke-width="1"/>
<line x1="314.5" y1="187.3" x2="318" y2="187.3" stroke="#9a9a9a" stroke-width="1"/>
<line x1="314.5" y1="194.8" x2="318" y2="194.8" stroke="#9a9a9a" stroke-width="1"/>
<line x1="314.5" y1="202.3" x2="318" y2="202.3" stroke="#9a9a9a" stroke-width="1"/>
<line x1="314.5" y1="209.8" x2="318" y2="209.8" stroke="#9a9a9a" stroke-width="1"/>
<line x1="314.5" y1="217.3" x2="318" y2="217.3" stroke="#9a9a9a" stroke-width="1"/>
<line x1="314.5" y1="224.8" x2="318" y2="224.8" stroke="#9a9a9a" stroke-width="1"/>
<line x1="314.5" y1="232.3" x2="318" y2="232.3" stroke="#9a9a9a" stroke-width="1"/>
<line x1="314.5" y1="239.8" x2="318" y2="239.8" stroke="#9a9a9a" stroke-width="1"/>
<line x1="314.5" y1="247.3" x2="318" y2="247.3" stroke="#9a9a9a" stroke-width="1"/>
<line x1="314.5" y1="254.8" x2="318" y2="254.8" stroke="#9a9a9a" stroke-width="1"/>
<line x1="314.5" y1="262.3" x2="318" y2="262.3" stroke="#9a9a9a" stroke-width="1"/>
<line x1="314.5" y1="269.8" x2="318" y2="269.8" stroke="#9a9a9a" stroke-width="1"/>
<line x1="314.5" y1="277.3" x2="318" y2="277.3" stroke="#9a9a9a" stroke-width="1"/>
<line x1="314.5" y1="284.8" x2="318" y2="284.8" stroke="#9a9a9a" stroke-width="1"/>
<line x1="314.5" y1="292.3" x2="318" y2="292.3" stroke="#9a9a9a" stroke-width="1"/>
<line x1="314.5" y1="299.8" x2="318" y2="299.8" stroke="#9a9a9a" stroke-width="1"/>
<line x1="314.5" y1="307.3" x2="318" y2="307.3" stroke="#9a9a9a" stroke-width="1"/>
<line x1="314.5" y1="314.8" x2="318" y2="314.8" stroke="#9a9a9a" stroke-width="1"/>
<line x1="314.5" y1="322.3" x2="318" y2="322.3" stroke="#9a9a9a" stroke-width="1"/>
<line x1="314.5" y1="329.8" x2="318" y2="329.8" stroke="#9a9a9a" stroke-width="1"/>
<line x1="314.5" y1="337.3" x2="318" y2="337.3" stroke="#9a9a9a" stroke-width="1"/>
<line x1="314.5" y1="344.8" x2="318" y2="344.8" stroke="#9a9a9a" stroke-width="1"/>
<line x1="314.5" y1="352.3" x2="318" y2="352.3" stroke="#9a9a9a" stroke-width="1"/>
<line x1="314.5" y1="359.8" x2="318" y2="359.8" stroke="#9a9a9a" stroke-width="1"/>
<line x1="314.5" y1="367.3" x2="318" y2="367.3" stroke="#9a9a9a" stroke-width="1"/>
<line x1="314.5" y1="374.8" x2="318" y2="374.8" stroke="#9a9a9a" stroke-width="1"/>
<line x1="314.5" y1="382.3" x2="318" y2="382.3" stroke="#9a9a9a" stroke-width="1"/>
<line x1="314.5" y1="389.8" x2="318" y2="389.8" stroke="#9a9a9a" stroke-width="1"/>
<line x1="314.5" y1="397.3" x2="318" y2="397.3" stroke="#9a9a9a" stroke-width="1"/>
<line x1="314.5" y1="404.8" x2="318" y2="404.8" stroke="#9a9a9a" stroke-width="1"/>
<line x1="314.5" y1="412.3" x2="318" y2="412.3" stroke="#9a9a9a" stroke-width="1"/>
<line x1="314.5" y1="419.8" x2="318" y2="419.8" stroke="#9a9a9a" stroke-width="1"/>
<line x1="314.5" y1="427.3" x2="318" y2="427.3" stroke="#9a9a9a" stroke-width="1"/>
<line x1="314.5" y1="434.8" x2="318" y2="434.8" stroke="#9a9a9a" stroke-width="1"/>
<line x1="314.5" y1="442.3" x2="318" y2="442.3" stroke="#9a9a9a" stroke-width="1"/>
<line x1="314.5" y1="449.8" x2="318" y2="449.8" stroke="#9a9a9a" stroke-width="1"/>
<line x1="314.5" y1="457.3" x2="318" y2="457.3" stroke="#9a9a9a" stroke-width="1"/>
<line x1="314.5" y1="464.8" x2="318" y2="464.8" stroke="#9a9a9a" stroke-width="1"/>
<line x1="314.5" y1="472.3" x2="318" y2="472.3" stroke="#9a9a9a" stroke-width="1"/>
<line x1="314.5" y1="479.8" x2="318" y2="479.8" stroke="#9a9a9a" stroke-width="1"/>
<line x1="314.5" y1="487.3" x2="318" y2="487.3" stroke="#9a9a9a" stroke-width="1"/>
<line x1="318.8" y1="491" x2="318.8" y2="498" stroke="#9a9a9a" stroke-width="1"/>
<line x1="346.5" y1="491" x2="346.5" y2="495" stroke="#9a9a9a" stroke-width="1"/>
<line x1="374.3" y1="491" x2="374.3" y2="495" stroke="#9a9a9a" stroke-width="1"/>
<line x1="402.0" y1="491" x2="402.0" y2="495" stroke="#9a9a9a" stroke-width="1"/>
<line x1="429.7" y1="491" x2="429.7" y2="495" stroke="#9a9a9a" stroke-width="1"/>
<line x1="457.5" y1="491" x2="457.5" y2="498" stroke="#9a9a9a" stroke-width="1"/>
<line x1="485.2" y1="491" x2="485.2" y2="495" stroke="#9a9a9a" stroke-width="1"/>
<line x1="513.0" y1="491" x2="513.0" y2="495" stroke="#9a9a9a" stroke-width="1"/>
<line x1="540.7" y1="491" x2="540.7" y2="495" stroke="#9a9a9a" stroke-width="1"/>
<line x1="568.4" y1="491" x2="568.4" y2="495" stroke="#9a9a9a" stroke-width="1"/>
<line x1="596.2" y1="491" x2="596.2" y2="498" stroke="#9a9a9a" stroke-width="1"/>
<line x1="623.9" y1="491" x2="623.9" y2="495" stroke="#9a9a9a" stroke-width="1"/>
<line x1="651.6" y1="491" x2="651.6" y2="495" stroke="#9a9a9a" stroke-width="1"/>
<line x1="679.4" y1="491" x2="679.4" y2="495" stroke="#9a9a9a" stroke-width="1"/>
<line x1="707.1" y1="491" x2="707.1" y2="495" stroke="#9a9a9a" stroke-width="1"/>
<line x1="734.9" y1="491" x2="734.9" y2="498" stroke="#9a9a9a" stroke-width="1"/>
<line x1="762.6" y1="491" x2="762.6" y2="495" stroke="#9a9a9a" stroke-width="1"/>
<line x1="790.3" y1="491" x2="790.3" y2="495" stroke="#9a9a9a" stroke-width="1"/>
<line x1="818.1" y1="491" x2="818.1" y2="495" stroke="#9a9a9a" stroke-width="1"/>
<line x1="845.8" y1="491" x2="845.8" y2="495" stroke="#9a9a9a" stroke-width="1"/>
<line x1="873.5" y1="491" x2="873.5" y2="498" stroke="#9a9a9a" stroke-width="1"/>
<line x1="901.3" y1="491" x2="901.3" y2="495" stroke="#9a9a9a" stroke-width="1"/>
<line x1="929.0" y1="491" x2="929.0" y2="495" stroke="#9a9a9a" stroke-width="1"/>
<line x1="956.8" y1="491" x2="956.8" y2="495" stroke="#9a9a9a" stroke-width="1"/>
<line x1="984.5" y1="491" x2="984.5" y2="495" stroke="#9a9a9a" stroke-width="1"/>
<line x1="1012.2" y1="491" x2="1012.2" y2="498" stroke="#9a9a9a" stroke-width="1"/>
<line x1="1040.0" y1="491" x2="1040.0" y2="495" stroke="#9a9a9a" stroke-width="1"/>
<line x1="1067.7" y1="491" x2="1067.7" y2="495" stroke="#9a9a9a" stroke-width="1"/>
<line x1="1095.4" y1="491" x2="1095.4" y2="495" stroke="#9a9a9a" stroke-width="1"/>
<line x1="1123.2" y1="491" x2="1123.2" y2="495" stroke="#9a9a9a" stroke-width="1"/>
<line x1="1150.9" y1="491" x2="1150.9" y2="498" stroke="#9a9a9a" stroke-width="1"/>
<line x1="1178.6" y1="491" x2="1178.6" y2="495" stroke="#9a9a9a" stroke-width="1"/>
<line x1="1206.4" y1="491" x2="1206.4" y2="495" stroke="#9a9a9a" stroke-width="1"/>
<line x1="1234.1" y1="491" x2="1234.1" y2="495" stroke="#9a9a9a" stroke-width="1"/>
<line x1="1261.9" y1="491" x2="1261.9" y2="495" stroke="#9a9a9a" stroke-width="1"/>
<line x1="1289.6" y1="491" x2="1289.6" y2="498" stroke="#9a9a9a" stroke-width="1"/>
<line x1="1317.3" y1="491" x2="1317.3" y2="495" stroke="#9a9a9a" stroke-width="1"/>
<line x1="1345.1" y1="491" x2="1345.1" y2="495" stroke="#9a9a9a" stroke-width="1"/>
<line x1="1372.8" y1="491" x2="1372.8" y2="495" stroke="#9a9a9a" stroke-width="1"/>
<line x1="1400.5" y1="491" x2="1400.5" y2="495" stroke="#9a9a9a" stroke-width="1"/>
<line x1="1428.3" y1="491" x2="1428.3" y2="498" stroke="#9a9a9a" stroke-width="1"/>
<line x1="1456.0" y1="491" x2="1456.0" y2="495" stroke="#9a9a9a" stroke-width="1"/>
<line x1="1483.8" y1="491" x2="1483.8" y2="495" stroke="#9a9a9a" stroke-width="1"/>
<line x1="1511.5" y1="491" x2="1511.5" y2="495" stroke="#9a9a9a" stroke-width="1"/>
<polyline points="374.2,465.4 401.9,410.8 429.8,399.8 457.5,383.1 485.2,364.8" fill="none" stroke="#f01414" stroke-width="1.8" stroke-dasharray="0.01,3" stroke-linecap="round" stroke-linejoin="round"/>
<circle cx="401.9" cy="410.8" r="2" fill="#f01414"/>
<circle cx="429.8" cy="399.8" r="2" fill="#f01414"/>
<circle cx="485.2" cy="364.8" r="2" fill="#f01414"/>
<polyline points="374.2,471.7 429.8,422.7 457.5,383.1" fill="none" stroke="#108040" stroke-width="1.53" opacity="1" stroke-linejoin="round"/>
<circle cx="374.2" cy="471.7" r="1.15" fill="#108040"/>
<circle cx="429.8" cy="422.7" r="1.15" fill="#108040"/>
<circle cx="457.5" cy="383.1" r="1.15" fill="#108040"/>
<polyline points="380.4,465.4 401.9,434.2 429.8,431.7 457.5,429.0 485.2,397.1" fill="none" stroke="#18b0f0" stroke-width="1.8" stroke-dasharray="0.01,3" stroke-linecap="round" stroke-linejoin="round"/>
<polyline points="374.2,431.0 401.9,443.5 429.8,445.6" fill="none" stroke="#18b0f0" stroke-width="1.87" opacity="1" stroke-linejoin="round"/>
<circle cx="374.2" cy="431.0" r="1.40" fill="#18b0f0"/>
<circle cx="401.9" cy="443.5" r="1.40" fill="#18b0f0"/>
<circle cx="429.8" cy="445.6" r="1.40" fill="#18b0f0"/>
<polyline points="374.2,471.7 401.9,471.7 429.8,445.6" fill="none" stroke="#18b0f0" stroke-width="1.87" opacity="1" stroke-linejoin="round"/>
<circle cx="374.2" cy="471.7" r="1.40" fill="#18b0f0"/>
<circle cx="401.9" cy="471.7" r="1.40" fill="#18b0f0"/>
<circle cx="429.8" cy="445.6" r="1.40" fill="#18b0f0"/>
<polyline points="485.2,446.7 512.9,460.2 540.8,435.2" fill="none" stroke="#18b0f0" stroke-width="1.87" opacity="1" stroke-linejoin="round"/>
<circle cx="485.2" cy="446.7" r="1.40" fill="#18b0f0"/>
<circle cx="512.9" cy="460.2" r="1.40" fill="#18b0f0"/>
<circle cx="540.8" cy="435.2" r="1.40" fill="#18b0f0"/>
<polyline points="485.2,471.7 512.9,444.6" fill="none" stroke="#18b0f0" stroke-width="1.87" opacity="1" stroke-linejoin="round"/>
<circle cx="485.2" cy="471.7" r="1.40" fill="#18b0f0"/>
<circle cx="512.9" cy="444.6" r="1.40" fill="#18b0f0"/>
<polyline points="499.2,471.7 526.9,469.2" fill="none" stroke="#18b0f0" stroke-width="1.87" opacity="1" stroke-linejoin="round"/>
<circle cx="499.2" cy="471.7" r="1.40" fill="#18b0f0"/>
<circle cx="526.9" cy="469.2" r="1.40" fill="#18b0f0"/>
<polyline points="582.5,466.5 610.0,450.8 637.9,442.5" fill="none" stroke="#18b0f0" stroke-width="1.87" opacity="1" stroke-linejoin="round"/>
<circle cx="582.5" cy="466.5" r="1.40" fill="#18b0f0"/>
<circle cx="610.0" cy="450.8" r="1.40" fill="#18b0f0"/>
<circle cx="637.9" cy="442.5" r="1.40" fill="#18b0f0"/>
<polyline points="540.8,383.1 568.3,346.0" fill="none" stroke="#18b0f0" stroke-width="1.8" stroke-dasharray="0.01,3" stroke-linecap="round" stroke-linejoin="round"/>
<circle cx="540.8" cy="368.1" r="2" fill="#f01414"/>
<polyline points="596.2,376.2 624.0,269.2" fill="none" stroke="#f08418" stroke-width="1.8" stroke-dasharray="0.01,3" stroke-linecap="round" stroke-linejoin="round"/>
<circle cx="624.0" cy="269.2" r="1.8" fill="#f08418"/>
<polyline points="512.9,421.7 540.8,414.4 568.3,389.0" fill="none" stroke="#6e6e6e" stroke-width="1.53" opacity="1" stroke-linejoin="round"/>
<circle cx="512.9" cy="421.7" r="1.15" fill="#6e6e6e"/>
<circle cx="540.8" cy="414.4" r="1.15" fill="#6e6e6e"/>
<circle cx="568.3" cy="389.0" r="1.15" fill="#6e6e6e"/>
<polyline points="485.2,463.3 512.9,389.8" fill="none" stroke="#6e6e6e" stroke-width="1.8" stroke-dasharray="0.01,3" stroke-linecap="round" stroke-linejoin="round"/>
<polyline points="512.9,419.6 540.8,396.2" fill="none" stroke="#8a0808" stroke-width="1.8" stroke-dasharray="0.01,3" stroke-linecap="round" stroke-linejoin="round"/>
<polyline points="512.9,414.4 540.8,414.4 568.3,419.6 596.2,418.5" fill="none" stroke="#f0f000" stroke-width="1.8" stroke-dasharray="0.01,3" stroke-linecap="round" stroke-linejoin="round"/>
<polyline points="429.8,452.9 457.5,440.4 485.2,436.2 512.9,435.2 486.7,452.9" fill="none" stroke="#f0f000" stroke-width="1.87" opacity="1" stroke-linejoin="round"/>
<circle cx="429.8" cy="452.9" r="1.40" fill="#f0f000"/>
<circle cx="457.5" cy="440.4" r="1.40" fill="#f0f000"/>
<circle cx="485.2" cy="436.2" r="1.40" fill="#f0f000"/>
<circle cx="512.9" cy="435.2" r="1.40" fill="#f0f000"/>
<circle cx="486.7" cy="452.9" r="1.40" fill="#f0f000"/>
<polyline points="374.2,471.7 429.8,467.1" fill="none" stroke="#f0f000" stroke-width="1.87" opacity="1" stroke-linejoin="round"/>
<circle cx="374.2" cy="471.7" r="1.40" fill="#f0f000"/>
<circle cx="429.8" cy="467.1" r="1.40" fill="#f0f000"/>
<polyline points="457.5,426.9 485.2,457.1" fill="none" stroke="#f08418" stroke-width="1.7" opacity="1" stroke-linejoin="round"/>
<circle cx="457.5" cy="426.9" r="1.27" fill="#f08418"/>
<circle cx="485.2" cy="457.1" r="1.27" fill="#f08418"/>
<polyline points="374.2,442.5 401.9,437.3" fill="none" stroke="#f08418" stroke-width="1.8" stroke-dasharray="0.01,3" stroke-linecap="round" stroke-linejoin="round"/>
<polyline points="485.2,432.1 540.8,421.7" fill="none" stroke="#f08418" stroke-width="1.8" stroke-dasharray="0.01,3" stroke-linecap="round" stroke-linejoin="round"/>
<polyline points="457.5,464.4 485.2,466.5 512.9,467.5 540.8,460.2 568.3,455.6" fill="none" stroke="#f01414" stroke-width="1.7" opacity="1" stroke-linejoin="round"/>
<circle cx="457.5" cy="464.4" r="1.27" fill="#f01414"/>
<circle cx="485.2" cy="466.5" r="1.27" fill="#f01414"/>
<circle cx="512.9" cy="467.5" r="1.27" fill="#f01414"/>
<circle cx="540.8" cy="460.2" r="1.27" fill="#f01414"/>
<circle cx="568.3" cy="455.6" r="1.27" fill="#f01414"/>
<polyline points="540.8,452.9 568.3,469.6" fill="none" stroke="#f08418" stroke-width="1.7" opacity="1" stroke-linejoin="round"/>
<circle cx="540.8" cy="452.9" r="1.27" fill="#f08418"/>
<circle cx="568.3" cy="469.6" r="1.27" fill="#f08418"/>
<polyline points="568.3,471.7 596.2,430.0 624.0,417.5" fill="none" stroke="#f01414" stroke-width="1.8" stroke-dasharray="0.01,3" stroke-linecap="round" stroke-linejoin="round"/>
<polyline points="596.2,413.3 624.0,390.4" fill="none" stroke="#8a0808" stroke-width="1.8" stroke-dasharray="0.01,3" stroke-linecap="round" stroke-linejoin="round"/>
<polyline points="596.2,457.1 624.0,434.2" fill="none" stroke="#6e6e6e" stroke-width="1.8" stroke-dasharray="0.01,3" stroke-linecap="round" stroke-linejoin="round"/>
<polyline points="540.8,471.7 568.3,443.5" fill="none" stroke="#108040" stroke-width="1.8" stroke-dasharray="0.01,3" stroke-linecap="round" stroke-linejoin="round"/>
<polyline points="624.0,471.7 637.9,457.1" fill="none" stroke="#f08418" stroke-width="1.7" opacity="1" stroke-linejoin="round"/>
<circle cx="624.0" cy="471.7" r="1.27" fill="#f08418"/>
<circle cx="637.9" cy="457.1" r="1.27" fill="#f08418"/>
<polyline points="610.0,421.7 637.9,415.4" fill="none" stroke="#f08418" stroke-width="1.7" opacity="1" stroke-linejoin="round"/>
<circle cx="610.0" cy="421.7" r="1.27" fill="#f08418"/>
<circle cx="637.9" cy="415.4" r="1.27" fill="#f08418"/>
<polyline points="596.2,437.3 624.0,437.3" fill="none" stroke="#18b0f0" stroke-width="1.7" opacity="1" stroke-linejoin="round"/>
<circle cx="596.2" cy="437.3" r="1.27" fill="#18b0f0"/>
<circle cx="624.0" cy="437.3" r="1.27" fill="#18b0f0"/>
<polyline points="624.0,373.3 640.0,375.4" fill="none" stroke="#18b0f0" stroke-width="1.8" stroke-dasharray="0.01,3" stroke-linecap="round" stroke-linejoin="round"/>
<polyline points="457.5,471.7 887.9,356.0" fill="none" stroke="#8a80c8" stroke-width="0.85" opacity="1" stroke-linejoin="round"/>
<circle cx="457.5" cy="471.7" r="0.64" fill="#8a80c8"/>
<circle cx="887.9" cy="356.0" r="0.64" fill="#8a80c8"/>
<polyline points="374.2,466.5 401.9,454.6 429.8,463.3" fill="none" stroke="#f01414" stroke-width="1.7" opacity="1" stroke-linejoin="round"/>
<circle cx="374.2" cy="466.5" r="1.27" fill="#f01414"/>
<circle cx="401.9" cy="454.6" r="1.27" fill="#f01414"/>
<circle cx="429.8" cy="463.3" r="1.27" fill="#f01414"/>
<polyline points="401.9,449.8 429.8,465.4" fill="none" stroke="#8a0808" stroke-width="1.53" opacity="1" stroke-linejoin="round"/>
<circle cx="401.9" cy="449.8" r="1.15" fill="#8a0808"/>
<circle cx="429.8" cy="465.4" r="1.15" fill="#8a0808"/>
<polyline points="429.8,442.5 457.5,458.1 485.2,460.2" fill="none" stroke="#108040" stroke-width="1.8" stroke-dasharray="0.01,3" stroke-linecap="round" stroke-linejoin="round"/>
<polyline points="374.2,455.0 401.9,450.4 429.8,448.8" fill="none" stroke="#6e6e6e" stroke-width="1.8" stroke-dasharray="0.01,3" stroke-linecap="round" stroke-linejoin="round"/>
<polyline points="457.5,443.5 485.2,430.0 512.9,421.7" fill="none" stroke="#8a0808" stroke-width="1.8" stroke-dasharray="0.01,3" stroke-linecap="round" stroke-linejoin="round"/>
<polyline points="374.2,443.5 401.9,465.4" fill="none" stroke="#8a0808" stroke-width="1.8" stroke-dasharray="0.01,3" stroke-linecap="round" stroke-linejoin="round"/>
<circle cx="374.2" cy="471.7" r="2.35" fill="none" stroke="#18b0f0" stroke-width="1"/>
<circle cx="401.9" cy="471.7" r="2.35" fill="none" stroke="#108040" stroke-width="1"/>
<circle cx="429.8" cy="471.7" r="2.35" fill="none" stroke="#6e6e6e" stroke-width="1"/>
<circle cx="485.2" cy="471.7" r="2.35" fill="none" stroke="#108040" stroke-width="1"/>
<circle cx="512.9" cy="471.7" r="2.35" fill="none" stroke="#f08418" stroke-width="1"/>
<circle cx="540.8" cy="471.7" r="2.35" fill="none" stroke="#108040" stroke-width="1"/>
<circle cx="568.3" cy="471.7" r="2.35" fill="none" stroke="#f01414" stroke-width="1"/>
<circle cx="429.8" cy="452.9" r="2.35" fill="none" stroke="#f0f000" stroke-width="1"/>
<circle cx="457.5" cy="440.4" r="2.35" fill="none" stroke="#f0f000" stroke-width="1"/>
<circle cx="485.2" cy="436.2" r="2.35" fill="none" stroke="#a09a10" stroke-width="1"/>
<circle cx="512.9" cy="435.2" r="2.35" fill="none" stroke="#8a0808" stroke-width="1"/>
<circle cx="568.3" cy="416.5" r="2.35" fill="none" stroke="#f0f000" stroke-width="1"/>
<circle cx="568.3" cy="427.9" r="2.35" fill="none" stroke="#8a0808" stroke-width="1"/>
<circle cx="596.2" cy="430.0" r="2.35" fill="none" stroke="#18b0f0" stroke-width="1"/>
<circle cx="610.0" cy="421.7" r="2.35" fill="none" stroke="#f08418" stroke-width="1"/>
<circle cx="624.0" cy="418.5" r="2.35" fill="none" stroke="#f01414" stroke-width="1"/>
<circle cx="637.9" cy="415.4" r="2.35" fill="none" stroke="#1e6cf0" stroke-width="1"/>
<circle cx="637.9" cy="425.8" r="2.35" fill="none" stroke="#f0f000" stroke-width="1"/>
<circle cx="401.9" cy="454.6" r="2.35" fill="none" stroke="#f01414" stroke-width="1"/>
<circle cx="401.9" cy="434.2" r="2.35" fill="none" stroke="#18b0f0" stroke-width="1"/>
<circle cx="429.8" cy="431.7" r="2.35" fill="none" stroke="#18b0f0" stroke-width="1"/>
<circle cx="485.2" cy="397.1" r="2.35" fill="none" stroke="#a09a10" stroke-width="1"/>
<circle cx="429.8" cy="422.7" r="2.35" fill="none" stroke="#108040" stroke-width="1"/>
<circle cx="457.5" cy="383.1" r="2.35" fill="none" stroke="#108040" stroke-width="1"/>
<circle cx="457.5" cy="423.8" r="2.35" fill="none" stroke="#6e6e6e" stroke-width="1"/>
<circle cx="457.5" cy="471.7" r="3.4" fill="none" stroke="#b8b8b8" stroke-width="1.3"/>
<path d="M454.5 471.7h6M457.5 468.7v6" stroke="#c0c0ff" stroke-width="1"/>
<circle cx="512.9" cy="451.5" r="2.2" fill="#1e6cf0"/>
<polyline points="679.6,374.8 706.7,371.7 734.8,335.8 762.9,330.0" fill="none" stroke="#108040" stroke-width="1.36" opacity="1" stroke-linejoin="round"/>
<circle cx="679.6" cy="374.8" r="1.02" fill="#108040"/>
<circle cx="706.7" cy="371.7" r="1.02" fill="#108040"/>
<circle cx="734.8" cy="335.8" r="1.02" fill="#108040"/>
<circle cx="762.9" cy="330.0" r="1.02" fill="#108040"/>
<polyline points="679.6,356.7 706.7,364.4 734.8,354.0 762.9,368.5" fill="none" stroke="#6e6e6e" stroke-width="1.224" opacity="1" stroke-linejoin="round"/>
<circle cx="679.6" cy="356.7" r="0.92" fill="#6e6e6e"/>
<circle cx="706.7" cy="364.4" r="0.92" fill="#6e6e6e"/>
<circle cx="734.8" cy="354.0" r="0.92" fill="#6e6e6e"/>
<circle cx="762.9" cy="368.5" r="0.92" fill="#6e6e6e"/>
<polyline points="651.5,374.8 679.6,401.9" fill="none" stroke="#6e6e6e" stroke-width="1.224" opacity="1" stroke-linejoin="round"/>
<circle cx="651.5" cy="374.8" r="0.92" fill="#6e6e6e"/>
<circle cx="679.6" cy="401.9" r="0.92" fill="#6e6e6e"/>
<polyline points="679.6,389.4 706.7,366.5" fill="none" stroke="#a09a10" stroke-width="1.224" opacity="1" stroke-linejoin="round"/>
<circle cx="679.6" cy="389.4" r="0.92" fill="#a09a10"/>
<circle cx="706.7" cy="366.5" r="0.92" fill="#a09a10"/>
<polyline points="623.9,373.3 651.5,376.9" fill="none" stroke="#18b0f0" stroke-width="1.8" stroke-dasharray="0.01,3" stroke-linecap="round" stroke-linejoin="round"/>
<polyline points="706.7,388.8 734.8,374.2 762.9,362.3" fill="none" stroke="#18b0f0" stroke-width="1.8" stroke-dasharray="0.01,3" stroke-linecap="round" stroke-linejoin="round"/>
<polyline points="651.5,402.5 679.6,410.2 706.7,409.2" fill="none" stroke="#18b0f0" stroke-width="1.496" opacity="1" stroke-linejoin="round"/>
<circle cx="651.5" cy="402.5" r="1.12" fill="#18b0f0"/>
<circle cx="679.6" cy="410.2" r="1.12" fill="#18b0f0"/>
<circle cx="706.7" cy="409.2" r="1.12" fill="#18b0f0"/>
<polyline points="762.9,373.3 791.0,396.7 818.8,380.4" fill="none" stroke="#18b0f0" stroke-width="1.496" opacity="1" stroke-linejoin="round"/>
<circle cx="762.9" cy="373.3" r="1.12" fill="#18b0f0"/>
<circle cx="791.0" cy="396.7" r="1.12" fill="#18b0f0"/>
<circle cx="818.8" cy="380.4" r="1.12" fill="#18b0f0"/>
<polyline points="735.8,471.7 749.4,471.7 762.9,469.6 776.5,466.5 804.6,365.4" fill="none" stroke="#18b0f0" stroke-width="1.8" stroke-dasharray="0.01,3" stroke-linecap="round" stroke-linejoin="round"/>
<polyline points="804.6,392.5 831.7,355.4" fill="none" stroke="#1e6cf0" stroke-width="1.8" stroke-dasharray="0.01,3" stroke-linecap="round" stroke-linejoin="round"/>
<polyline points="846.2,375.8 874.4,331.0 879.6,330.0 901.5,322.7 929.6,318.5 956.7,292.9" fill="none" stroke="#f0f000" stroke-width="1.496" opacity="1" stroke-linejoin="round"/>
<circle cx="846.2" cy="375.8" r="1.12" fill="#f0f000"/>
<circle cx="874.4" cy="331.0" r="1.12" fill="#f0f000"/>
<circle cx="879.6" cy="330.0" r="1.12" fill="#f0f000"/>
<circle cx="901.5" cy="322.7" r="1.12" fill="#f0f000"/>
<circle cx="929.6" cy="318.5" r="1.12" fill="#f0f000"/>
<circle cx="956.7" cy="292.9" r="1.12" fill="#f0f000"/>
<polyline points="749.4,451.9 776.5,445.6 804.6,437.3" fill="none" stroke="#f01414" stroke-width="1.36" opacity="1" stroke-linejoin="round"/>
<circle cx="749.4" cy="451.9" r="1.02" fill="#f01414"/>
<circle cx="776.5" cy="445.6" r="1.02" fill="#f01414"/>
<circle cx="804.6" cy="437.3" r="1.02" fill="#f01414"/>
<polyline points="706.7,459.2 734.8,437.3" fill="none" stroke="#f08418" stroke-width="1.36" opacity="1" stroke-linejoin="round"/>
<circle cx="706.7" cy="459.2" r="1.02" fill="#f08418"/>
<circle cx="734.8" cy="437.3" r="1.02" fill="#f08418"/>
<polyline points="640.0,451.0 651.5,438.0 679.6,427.9 706.7,425.8 734.8,400.0 748.0,408.0" fill="none" stroke="#f08418" stroke-width="1.36" opacity="1" stroke-linejoin="round"/>
<circle cx="640.0" cy="451.0" r="1.02" fill="#f08418"/>
<circle cx="651.5" cy="438.0" r="1.02" fill="#f08418"/>
<circle cx="679.6" cy="427.9" r="1.02" fill="#f08418"/>
<circle cx="706.7" cy="425.8" r="1.02" fill="#f08418"/>
<circle cx="734.8" cy="400.0" r="1.02" fill="#f08418"/>
<circle cx="748.0" cy="408.0" r="1.02" fill="#f08418"/>
<polyline points="791.0,402.9 804.6,434.2 831.7,439.4 859.8,412.3 887.9,408.1" fill="none" stroke="#f08418" stroke-width="1.8" stroke-dasharray="0.01,3" stroke-linecap="round" stroke-linejoin="round"/>
<polyline points="846.2,462.3 874.4,457.5 901.5,445.6 929.6,434.2 956.7,426.9" fill="none" stroke="#f08418" stroke-width="1.8" stroke-dasharray="0.01,3" stroke-linecap="round" stroke-linejoin="round"/>
<polyline points="706.7,455.0 734.8,418.5" fill="none" stroke="#f0f000" stroke-width="1.8" stroke-dasharray="0.01,3" stroke-linecap="round" stroke-linejoin="round"/>
<polyline points="749.4,431.0 776.5,426.2 804.6,424.8 831.7,410.2 859.8,407.1 887.9,379.0 902.0,362.0" fill="none" stroke="#f0f000" stroke-width="1.8" stroke-dasharray="0.01,3" stroke-linecap="round" stroke-linejoin="round"/>
<polyline points="818.1,430.0 846.2,385.2" fill="none" stroke="#108040" stroke-width="1.36" opacity="1" stroke-linejoin="round"/>
<circle cx="818.1" cy="430.0" r="1.02" fill="#108040"/>
<circle cx="846.2" cy="385.2" r="1.02" fill="#108040"/>
<polyline points="651.5,390.4 734.8,398.8 791.0,405.0" fill="none" stroke="#8a0808" stroke-width="1.8" stroke-dasharray="0.01,3" stroke-linecap="round" stroke-linejoin="round"/>
<polyline points="859.8,427.9 887.9,402.9" fill="none" stroke="#f01414" stroke-width="1.36" opacity="1" stroke-linejoin="round"/>
<circle cx="859.8" cy="427.9" r="1.02" fill="#f01414"/>
<circle cx="887.9" cy="402.9" r="1.02" fill="#f01414"/>
<polyline points="873.3,389.4 901.5,397.7" fill="none" stroke="#f01414" stroke-width="1.36" opacity="1" stroke-linejoin="round"/>
<circle cx="873.3" cy="389.4" r="1.02" fill="#f01414"/>
<circle cx="901.5" cy="397.7" r="1.02" fill="#f01414"/>
<polyline points="846.2,380.0 887.9,355.0 917.0,350.8" fill="none" stroke="#f01414" stroke-width="1.8" stroke-dasharray="0.01,3" stroke-linecap="round" stroke-linejoin="round"/>
<polyline points="791.0,351.9 804.6,377.9 831.7,417.5" fill="none" stroke="#6e6e6e" stroke-width="1.8" stroke-dasharray="0.01,3" stroke-linecap="round" stroke-linejoin="round"/>
<polyline points="762.9,420.6 791.0,418.5" fill="none" stroke="#a09a10" stroke-width="1.36" opacity="1" stroke-linejoin="round"/>
<circle cx="762.9" cy="420.6" r="1.02" fill="#a09a10"/>
<circle cx="791.0" cy="418.5" r="1.02" fill="#a09a10"/>
<polyline points="846.2,371.7 874.4,347.7" fill="none" stroke="#8a0808" stroke-width="1.8" stroke-dasharray="0.01,3" stroke-linecap="round" stroke-linejoin="round"/>
<polyline points="887.9,367.5 929.6,337.3" fill="none" stroke="#f0f000" stroke-width="1.496" opacity="1" stroke-linejoin="round"/>
<circle cx="887.9" cy="367.5" r="1.12" fill="#f0f000"/>
<circle cx="929.6" cy="337.3" r="1.12" fill="#f0f000"/>
<polyline points="901.5,344.6 929.6,337.3" fill="none" stroke="#a09a10" stroke-width="1.224" opacity="1" stroke-linejoin="round"/>
<circle cx="901.5" cy="344.6" r="0.92" fill="#a09a10"/>
<circle cx="929.6" cy="337.3" r="0.92" fill="#a09a10"/>
<polyline points="917.0,382.0 944.0,374.8" fill="none" stroke="#f08418" stroke-width="1.36" opacity="1" stroke-linejoin="round"/>
<circle cx="917.0" cy="382.0" r="1.02" fill="#f08418"/>
<circle cx="944.0" cy="374.8" r="1.02" fill="#f08418"/>
<circle cx="762.9" cy="330.0" r="2.35" fill="none" stroke="#108040" stroke-width="1"/>
<circle cx="679.6" cy="374.8" r="2.35" fill="none" stroke="#108040" stroke-width="1"/>
<circle cx="706.7" cy="371.7" r="2.35" fill="none" stroke="#108040" stroke-width="1"/>
<circle cx="679.6" cy="389.4" r="2.35" fill="none" stroke="#f0f000" stroke-width="1"/>
<circle cx="706.7" cy="366.5" r="2.35" fill="none" stroke="#f0f000" stroke-width="1"/>
<circle cx="791.0" cy="396.7" r="2.35" fill="none" stroke="#18b0f0" stroke-width="1"/>
<circle cx="804.6" cy="365.4" r="2.35" fill="none" stroke="#18b0f0" stroke-width="1"/>
<circle cx="831.7" cy="355.4" r="2.35" fill="none" stroke="#1e6cf0" stroke-width="1"/>
<circle cx="831.7" cy="439.4" r="2.35" fill="none" stroke="#f08418" stroke-width="1"/>
<circle cx="859.8" cy="412.3" r="2.35" fill="none" stroke="#f08418" stroke-width="1"/>
<circle cx="887.9" cy="408.1" r="2.35" fill="none" stroke="#f08418" stroke-width="1"/>
<circle cx="874.4" cy="457.5" r="2.35" fill="none" stroke="#f08418" stroke-width="1"/>
<circle cx="901.5" cy="445.6" r="2.35" fill="none" stroke="#f08418" stroke-width="1"/>
<circle cx="929.6" cy="434.2" r="2.35" fill="none" stroke="#f08418" stroke-width="1"/>
<circle cx="956.7" cy="426.9" r="2.35" fill="none" stroke="#f08418" stroke-width="1"/>
<circle cx="776.5" cy="426.2" r="2.35" fill="none" stroke="#f0f000" stroke-width="1"/>
<circle cx="804.6" cy="424.8" r="2.35" fill="none" stroke="#f0f000" stroke-width="1"/>
<circle cx="887.9" cy="379.0" r="2.35" fill="none" stroke="#f0f000" stroke-width="1"/>
<circle cx="929.6" cy="318.5" r="2.35" fill="none" stroke="#f0f000" stroke-width="1"/>
<circle cx="956.7" cy="292.9" r="2.35" fill="none" stroke="#f0f000" stroke-width="1"/>
<circle cx="929.6" cy="337.3" r="2.35" fill="none" stroke="#a09a10" stroke-width="1"/>
<circle cx="791.0" cy="418.5" r="2.35" fill="none" stroke="#a09a10" stroke-width="1"/>
<circle cx="846.2" cy="380.0" r="2.35" fill="none" stroke="#f01414" stroke-width="1"/>
<circle cx="887.9" cy="402.9" r="2.35" fill="none" stroke="#f01414" stroke-width="1"/>
<circle cx="917.0" cy="350.8" r="2.35" fill="none" stroke="#f01414" stroke-width="1"/>
<circle cx="749.4" cy="425.0" r="2.35" fill="none" stroke="#f0f000" stroke-width="1"/>
<circle cx="763.0" cy="378.0" r="2.35" fill="none" stroke="#108040" stroke-width="1"/>
<circle cx="851.0" cy="393.0" r="2.35" fill="none" stroke="#f0f000" stroke-width="1"/>
<circle cx="887.9" cy="356.0" r="3.6" fill="none" stroke="#d8b8c8" stroke-width="1.3"/>
<path d="M884.5 356h7M887.9 352.5v7" stroke="#d8c8d8" stroke-width="1"/>
<circle cx="651.5" cy="369.0" r="1.8" fill="#6e6e6e"/>
<circle cx="734.8" cy="357.0" r="1.8" fill="#6e6e6e"/>
<circle cx="763.0" cy="359.0" r="1.8" fill="#6e6e6e"/>
<circle cx="791.0" cy="351.9" r="1.8" fill="#6e6e6e"/>
<circle cx="846.0" cy="357.0" r="1.8" fill="#6e6e6e"/>
<circle cx="917.0" cy="382.0" r="1.8" fill="#1e6cf0"/>
<circle cx="944.0" cy="330.0" r="1.8" fill="#6e6e6e"/>
<circle cx="791.0" cy="385.0" r="1.8" fill="#f08418"/>
<circle cx="804.6" cy="437.3" r="1.8" fill="#f01414"/>
<circle cx="749.4" cy="451.9" r="1.8" fill="#f01414"/>
<polyline points="960.0,374.8 985.0,333.8 1013.0,331.0" fill="none" stroke="#f01414" stroke-width="1.36" opacity="1" stroke-linejoin="round"/>
<circle cx="960.0" cy="374.8" r="1.02" fill="#f01414"/>
<circle cx="985.0" cy="333.8" r="1.02" fill="#f01414"/>
<circle cx="1013.0" cy="331.0" r="1.02" fill="#f01414"/>
<polyline points="1013.0,413.3 1040.2,376.9 1068.3,354.6 1096.5,349.2 1124.0,248.3" fill="none" stroke="#f01414" stroke-width="1.36" opacity="1" stroke-linejoin="round"/>
<circle cx="1013.0" cy="413.3" r="1.02" fill="#f01414"/>
<circle cx="1040.2" cy="376.9" r="1.02" fill="#f01414"/>
<circle cx="1068.3" cy="354.6" r="1.02" fill="#f01414"/>
<circle cx="1096.5" cy="349.2" r="1.02" fill="#f01414"/>
<circle cx="1124.0" cy="248.3" r="1.02" fill="#f01414"/>
<polyline points="1040.2,376.9 1068.3,375.8 1096.5,332.0 1101.0,318.0" fill="none" stroke="#8a0808" stroke-width="1.224" opacity="1" stroke-linejoin="round"/>
<circle cx="1040.2" cy="376.9" r="0.92" fill="#8a0808"/>
<circle cx="1068.3" cy="375.8" r="0.92" fill="#8a0808"/>
<circle cx="1096.5" cy="332.0" r="0.92" fill="#8a0808"/>
<circle cx="1101.0" cy="318.0" r="0.92" fill="#8a0808"/>
<polyline points="985.0,333.8 1013.0,349.8" fill="none" stroke="#8a0808" stroke-width="1.8" stroke-dasharray="0.01,3" stroke-linecap="round" stroke-linejoin="round"/>
<polyline points="985.0,385.2 1013.0,358.1 1040.2,317.9" fill="none" stroke="#108040" stroke-width="1.8" stroke-dasharray="0.01,3" stroke-linecap="round" stroke-linejoin="round"/>
<polyline points="1040.2,344.6 1068.3,339.8" fill="none" stroke="#108040" stroke-width="1.36" opacity="1" stroke-linejoin="round"/>
<circle cx="1040.2" cy="344.6" r="1.02" fill="#108040"/>
<circle cx="1068.3" cy="339.8" r="1.02" fill="#108040"/>
<polyline points="1013.0,369.6 1026.7,363.3 1040.2,350.2" fill="none" stroke="#f0f000" stroke-width="1.8" stroke-dasharray="0.01,3" stroke-linecap="round" stroke-linejoin="round"/>
<polyline points="960.0,385.2 971.5,382.0" fill="none" stroke="#f01414" stroke-width="1.36" opacity="1" stroke-linejoin="round"/>
<circle cx="960.0" cy="385.2" r="1.02" fill="#f01414"/>
<circle cx="971.5" cy="382.0" r="1.02" fill="#f01414"/>
<polyline points="970.4,436.2 999.6,426.9" fill="none" stroke="#8a0808" stroke-width="1.224" opacity="1" stroke-linejoin="round"/>
<circle cx="970.4" cy="436.2" r="0.92" fill="#8a0808"/>
<circle cx="999.6" cy="426.9" r="0.92" fill="#8a0808"/>
<polyline points="1165.2,372.7 1193.3,389.0 1221.5,382.1" fill="none" stroke="#8a0808" stroke-width="1.224" opacity="1" stroke-linejoin="round"/>
<circle cx="1165.2" cy="372.7" r="0.92" fill="#8a0808"/>
<circle cx="1193.3" cy="389.0" r="0.92" fill="#8a0808"/>
<circle cx="1221.5" cy="382.1" r="0.92" fill="#8a0808"/>
<circle cx="1013.0" cy="416.0" r="2.35" fill="none" stroke="#f08418" stroke-width="1"/>
<circle cx="999.0" cy="418.5" r="2" fill="#f01414"/>
<circle cx="1054.8" cy="448.8" r="1.6" fill="#8a0808"/>
<circle cx="1026.7" cy="351.9" r="1.8" fill="#f01414"/>
<circle cx="1068.3" cy="335.8" r="1.6" fill="#8a0808"/>
<circle cx="985.0" cy="333.8" r="2.35" fill="none" stroke="#f01414" stroke-width="1"/>
<circle cx="1040.2" cy="376.9" r="2.35" fill="none" stroke="#8a0808" stroke-width="1"/>
<circle cx="985.0" cy="385.2" r="2.35" fill="none" stroke="#108040" stroke-width="1"/>
<polyline points="679.6,310.2 707.1,298.1" fill="none" stroke="#f08418" stroke-width="1.8" stroke-dasharray="0.01,3" stroke-linecap="round" stroke-linejoin="round"/>
<circle cx="679.6" cy="310.2" r="1.8" fill="#f08418"/>
<circle cx="707.1" cy="298.1" r="1.8" fill="#f08418"/>
<polyline points="874.0,372.0 901.5,340.0 929.6,308.1" fill="none" stroke="#f01414" stroke-width="1.8" stroke-dasharray="0.01,3" stroke-linecap="round" stroke-linejoin="round"/>
<circle cx="929.6" cy="308.1" r="2.35" fill="none" stroke="#f01414" stroke-width="1"/>
<polyline points="902.5,355.0 929.6,329.0 956.7,310.8" fill="none" stroke="#18b0f0" stroke-width="1.8" stroke-dasharray="0.01,3" stroke-linecap="round" stroke-linejoin="round"/>
<circle cx="956.7" cy="310.8" r="2.35" fill="none" stroke="#18b0f0" stroke-width="1"/>
<circle cx="901.5" cy="304.0" r="2.35" fill="none" stroke="#18b0f0" stroke-width="1"/>
<polyline points="1013.1,280.0 1040.2,275.8" fill="none" stroke="#18b0f0" stroke-width="1.8" stroke-dasharray="0.01,3" stroke-linecap="round" stroke-linejoin="round"/>
<circle cx="1013.1" cy="280.0" r="2.35" fill="none" stroke="#18b0f0" stroke-width="1"/>
<circle cx="1040.2" cy="275.8" r="2.35" fill="none" stroke="#18b0f0" stroke-width="1"/>
<polyline points="1095.4,245.0 1124.0,221.0" fill="none" stroke="#18b0f0" stroke-width="1.8" stroke-dasharray="0.01,3" stroke-linecap="round" stroke-linejoin="round"/>
<circle cx="1095.4" cy="245.0" r="2.35" fill="none" stroke="#18b0f0" stroke-width="1"/>
<circle cx="1124.0" cy="221.0" r="2.35" fill="none" stroke="#18b0f0" stroke-width="1"/>
<polyline points="1013.1,326.9 1040.2,310.2 1068.3,287.7 1095.4,282.7" fill="none" stroke="#a09a10" stroke-width="1.36" opacity="1" stroke-linejoin="round"/>
<circle cx="1013.1" cy="326.9" r="1.02" fill="#a09a10"/>
<circle cx="1040.2" cy="310.2" r="1.02" fill="#a09a10"/>
<circle cx="1068.3" cy="287.7" r="1.02" fill="#a09a10"/>
<circle cx="1095.4" cy="282.7" r="1.02" fill="#a09a10"/>
<circle cx="1013.1" cy="326.9" r="2.35" fill="none" stroke="#a09a10" stroke-width="1"/>
<circle cx="1040.2" cy="310.2" r="2.35" fill="none" stroke="#a09a10" stroke-width="1"/>
<circle cx="1068.3" cy="287.7" r="2.35" fill="none" stroke="#a09a10" stroke-width="1"/>
<circle cx="1095.4" cy="282.7" r="2.35" fill="none" stroke="#a09a10" stroke-width="1"/>
<polyline points="1068.3,312.3 1095.4,309.2 1124.0,273.1" fill="none" stroke="#f01414" stroke-width="1.36" opacity="1" stroke-linejoin="round"/>
<circle cx="1068.3" cy="312.3" r="1.02" fill="#f01414"/>
<circle cx="1095.4" cy="309.2" r="1.02" fill="#f01414"/>
<circle cx="1124.0" cy="273.1" r="1.02" fill="#f01414"/>
<circle cx="1124.0" cy="273.1" r="2.35" fill="none" stroke="#f01414" stroke-width="1"/>
<circle cx="1124.0" cy="248.3" r="2.35" fill="none" stroke="#f01414" stroke-width="1"/>
<circle cx="1068.3" cy="312.3" r="2.35" fill="none" stroke="#f01414" stroke-width="1"/>
<polyline points="1013.0,327.0 1040.2,293.5" fill="none" stroke="#8a0808" stroke-width="1.8" stroke-dasharray="0.01,3" stroke-linecap="round" stroke-linejoin="round"/>
<circle cx="1040.2" cy="293.5" r="2.35" fill="none" stroke="#8a0808" stroke-width="1"/>
<circle cx="1040.2" cy="301.5" r="1.8" fill="#f01414"/>
<polyline points="1095.4,292.0 1124.0,301.9 1151.2,270.6" fill="none" stroke="#f01414" stroke-width="1.8" stroke-dasharray="0.01,3" stroke-linecap="round" stroke-linejoin="round"/>
<circle cx="1095.4" cy="292.0" r="1.8" fill="#f01414"/>
<circle cx="1151.2" cy="270.6" r="1.8" fill="#f01414"/>
<circle cx="1068.3" cy="309.2" r="2.35" fill="none" stroke="#f08418" stroke-width="1"/>
<circle cx="1095.4" cy="305.0" r="1.8" fill="#f0f000"/>
<polyline points="1235.0,255.4 1262.5,263.3 1290.0,248.2" fill="none" stroke="#f01414" stroke-width="1.8" stroke-dasharray="0.01,3" stroke-linecap="round" stroke-linejoin="round"/>
<circle cx="1262.5" cy="263.3" r="1.8" fill="#f01414"/>
<circle cx="1290.0" cy="248.2" r="1.8" fill="#f01414"/>
<polyline points="1262.5,213.3 1290.0,182.3" fill="none" stroke="#18b0f0" stroke-width="1.8" stroke-dasharray="0.01,3" stroke-linecap="round" stroke-linejoin="round"/>
<circle cx="1262.5" cy="213.3" r="2.35" fill="none" stroke="#18b0f0" stroke-width="1"/>
<circle cx="1290.0" cy="182.3" r="2.35" fill="none" stroke="#18b0f0" stroke-width="1"/>
<circle cx="1345.6" cy="131.3" r="2.35" fill="none" stroke="#18b0f0" stroke-width="1"/>
<circle cx="1276.0" cy="304.0" r="2.35" fill="none" stroke="#8a0808" stroke-width="1"/>
<polyline points="679.2,431.9 708.3,428.1" fill="none" stroke="#18b0f0" stroke-width="1.53" opacity="1" stroke-linejoin="round"/>
<circle cx="679.2" cy="431.9" r="1.15" fill="#18b0f0"/>
<circle cx="708.3" cy="428.1" r="1.15" fill="#18b0f0"/>
<polyline points="640.0,428.1 666.6,412.3" fill="none" stroke="#f0f000" stroke-width="1.4449999999999998" opacity="1" stroke-linejoin="round"/>
<circle cx="640.0" cy="428.1" r="1.08" fill="#f0f000"/>
<circle cx="666.6" cy="412.3" r="1.08" fill="#f0f000"/>
<polyline points="651.4,437.6 666.6,429.3 680.5,424.3" fill="none" stroke="#f0f000" stroke-width="1.4449999999999998" opacity="1" stroke-linejoin="round"/>
<circle cx="651.4" cy="437.6" r="1.08" fill="#f0f000"/>
<circle cx="666.6" cy="429.3" r="1.08" fill="#f0f000"/>
<circle cx="680.5" cy="424.3" r="1.08" fill="#f0f000"/>
<polyline points="708.3,426.5 736.1,421.1 764.0,413.5" fill="none" stroke="#f01414" stroke-width="1.4449999999999998" opacity="1" stroke-linejoin="round"/>
<circle cx="708.3" cy="426.5" r="1.08" fill="#f01414"/>
<circle cx="736.1" cy="421.1" r="1.08" fill="#f01414"/>
<circle cx="764.0" cy="413.5" r="1.08" fill="#f01414"/>
<polyline points="748.8,452.7 776.6,459.7" fill="none" stroke="#18b0f0" stroke-width="1.53" opacity="1" stroke-linejoin="round"/>
<circle cx="748.8" cy="452.7" r="1.15" fill="#18b0f0"/>
<circle cx="776.6" cy="459.7" r="1.15" fill="#18b0f0"/>
<polyline points="734.9,471.1 791.8,470.1" fill="none" stroke="#f08418" stroke-width="1.8" stroke-dasharray="0.01,3" stroke-linecap="round" stroke-linejoin="round"/>
<polyline points="666.6,457.2 693.1,448.9" fill="none" stroke="#18b0f0" stroke-width="1.8" stroke-dasharray="0.01,3" stroke-linecap="round" stroke-linejoin="round"/>
<polyline points="748.8,411.6 776.6,405.9 800.0,396.4" fill="none" stroke="#f01414" stroke-width="1.8" stroke-dasharray="0.01,3" stroke-linecap="round" stroke-linejoin="round"/>
<polyline points="734.9,420.5 762.7,430.0 789.3,415.4" fill="none" stroke="#f01414" stroke-width="1.8" stroke-dasharray="0.01,3" stroke-linecap="round" stroke-linejoin="round"/>
<polyline points="707.0,416.7 734.9,392.6" fill="none" stroke="#108040" stroke-width="1.8" stroke-dasharray="0.01,3" stroke-linecap="round" stroke-linejoin="round"/>
<polyline points="640.0,428.1 665.3,421.7" fill="none" stroke="#6e6e6e" stroke-width="1.8" stroke-dasharray="0.01,3" stroke-linecap="round" stroke-linejoin="round"/>
<circle cx="679.8" cy="392.6" r="2.35" fill="none" stroke="#f0f000" stroke-width="1"/>
<circle cx="707.0" cy="398.3" r="2.35" fill="none" stroke="#f01414" stroke-width="1"/>
<circle cx="721.0" cy="397.7" r="2.35" fill="none" stroke="#f0f000" stroke-width="1"/>
<circle cx="736.1" cy="397.7" r="2.35" fill="none" stroke="#f01414" stroke-width="1"/>
<circle cx="734.9" cy="392.6" r="2.35" fill="none" stroke="#108040" stroke-width="1"/>
<circle cx="665.9" cy="422.4" r="2.35" fill="none" stroke="#f01414" stroke-width="1"/>
<circle cx="666.6" cy="412.3" r="2.35" fill="none" stroke="#f0f000" stroke-width="1"/>
<circle cx="707.0" cy="416.7" r="2.35" fill="none" stroke="#108040" stroke-width="1"/>
<circle cx="748.8" cy="412.9" r="2.35" fill="none" stroke="#1e6cf0" stroke-width="1"/>
<circle cx="748.8" cy="422.4" r="2.35" fill="none" stroke="#a09a10" stroke-width="1"/>
<circle cx="748.8" cy="431.2" r="2.35" fill="none" stroke="#f0f000" stroke-width="1"/>
<circle cx="748.8" cy="436.9" r="2.35" fill="none" stroke="#108040" stroke-width="1"/>
<circle cx="790.5" cy="431.9" r="2.35" fill="none" stroke="#f0f000" stroke-width="1"/>
<circle cx="790.5" cy="433.8" r="2.35" fill="none" stroke="#f01414" stroke-width="1"/>
<circle cx="651.4" cy="471.1" r="2.35" fill="none" stroke="#f0f000" stroke-width="1"/>
<circle cx="707.0" cy="459.7" r="2.35" fill="none" stroke="#f08418" stroke-width="1"/>
<circle cx="776.6" cy="383.8" r="2.35" fill="none" stroke="#f0f000" stroke-width="1"/>
<circle cx="762.7" cy="388.9" r="2.35" fill="none" stroke="#f01414" stroke-width="1"/>
<circle cx="679.8" cy="424.3" r="2.35" fill="none" stroke="#f0f000" stroke-width="1"/>
<circle cx="651.4" cy="437.6" r="2.35" fill="none" stroke="#f0f000" stroke-width="1"/>
<circle cx="748.8" cy="389.5" r="1.7" fill="#6e6e6e"/>
<circle cx="748.8" cy="445.1" r="1.7" fill="#6e6e6e"/>
<circle cx="651.4" cy="424.9" r="1.7" fill="#f01414"/>
<circle cx="651.4" cy="445.8" r="1.7" fill="#f01414"/>
<circle cx="776.6" cy="405.9" r="1.7" fill="#f01414"/>
<circle cx="748.8" cy="408.5" r="1.7" fill="#1e6cf0"/>
<circle cx="790.5" cy="386.3" r="1.7" fill="#f08418"/>
<circle cx="776.6" cy="395.8" r="1.7" fill="#f08418"/>
<circle cx="693.1" cy="448.9" r="1.7" fill="#18b0f0"/>
<circle cx="693.1" cy="453.4" r="1.7" fill="#18b0f0"/>
<circle cx="693.1" cy="456.5" r="1.7" fill="#f01414"/>
<circle cx="679.2" cy="431.9" r="1.7" fill="#18b0f0"/>
<circle cx="708.3" cy="428.1" r="1.7" fill="#18b0f0"/>
<circle cx="666.6" cy="457.2" r="1.7" fill="#18b0f0"/>
<circle cx="776.6" cy="459.7" r="1.7" fill="#18b0f0"/>
<circle cx="776.6" cy="466.6" r="1.7" fill="#18b0f0"/>
<circle cx="748.8" cy="471.1" r="1.7" fill="#18b0f0"/>
<circle cx="791.8" cy="470.1" r="1.7" fill="#f08418"/>
<circle cx="734.9" cy="471.1" r="1.7" fill="#f08418"/>
<circle cx="707.0" cy="454.6" r="1.7" fill="#f0f000"/>
<circle cx="734.9" cy="418.6" r="1.7" fill="#f0f000"/>
<circle cx="734.9" cy="436.9" r="1.7" fill="#8a0808"/>
<polyline points="511.6,467.3 568.5,416.7" fill="none" stroke="#8a0808" stroke-width="1.36" opacity="1" stroke-linejoin="round"/>
<circle cx="511.6" cy="467.3" r="1.02" fill="#8a0808"/>
<circle cx="568.5" cy="416.7" r="1.02" fill="#8a0808"/>
<polyline points="568.5,437.6 640.0,423.0" fill="none" stroke="#f08418" stroke-width="1.8" stroke-dasharray="0.01,3" stroke-linecap="round" stroke-linejoin="round"/>
<polyline points="485.1,471.1 512.9,461.0" fill="none" stroke="#f0f000" stroke-width="1.8" stroke-dasharray="0.01,3" stroke-linecap="round" stroke-linejoin="round"/>
<polyline points="512.9,468.5 540.7,461.0 568.5,445.8" fill="none" stroke="#6e6e6e" stroke-width="1.8" stroke-dasharray="0.01,3" stroke-linecap="round" stroke-linejoin="round"/>
<polyline points="568.5,445.1 596.4,433.1" fill="none" stroke="#6e6e6e" stroke-width="1.36" opacity="1" stroke-linejoin="round"/>
<circle cx="568.5" cy="445.1" r="1.02" fill="#6e6e6e"/>
<circle cx="596.4" cy="433.1" r="1.02" fill="#6e6e6e"/>
<circle cx="568.5" cy="445.1" r="2.35" fill="none" stroke="#f01414" stroke-width="1"/>
<circle cx="512.9" cy="389.5" r="1.7" fill="#6e6e6e"/>
<circle cx="568.5" cy="388.6" r="1.7" fill="#6e6e6e"/>
<circle cx="540.7" cy="414.2" r="1.7" fill="#6e6e6e"/>
<circle cx="512.9" cy="414.2" r="1.7" fill="#f0f000"/>
<circle cx="596.4" cy="418.6" r="1.7" fill="#f0f000"/>
<circle cx="568.5" cy="420.5" r="1.7" fill="#f0f000"/>
<circle cx="596.4" cy="411.6" r="1.7" fill="#6e6e6e"/>
<circle cx="596.4" cy="445.8" r="1.7" fill="#f08418"/>
<circle cx="596.4" cy="456.5" r="1.7" fill="#6e6e6e"/>
<circle cx="540.7" cy="460.3" r="1.7" fill="#6e6e6e"/>
<circle cx="568.5" cy="455.6" r="1.7" fill="#f01414"/>
<circle cx="540.7" cy="453.4" r="1.7" fill="#f08418"/>
<circle cx="582.5" cy="466.6" r="1.7" fill="#18b0f0"/>
<circle cx="624.2" cy="471.1" r="1.7" fill="#f08418"/>
<circle cx="638.1" cy="448.3" r="1.7" fill="#f01414"/>
<circle cx="638.1" cy="461.0" r="1.7" fill="#f01414"/>
<circle cx="624.2" cy="437.6" r="1.7" fill="#18b0f0"/>
<circle cx="540.7" cy="434.4" r="1.7" fill="#18b0f0"/>
<circle cx="485.7" cy="396.4" r="1.7" fill="#18b0f0"/>
<circle cx="541.3" cy="382.5" r="1.7" fill="#18b0f0"/>
<circle cx="624.2" cy="390.1" r="1.7" fill="#8a0808"/>
<circle cx="541.3" cy="396.4" r="1.7" fill="#8a0808"/>
<polyline points="383.1,459.4 400.8,434.2" fill="none" stroke="#f0f000" stroke-width="1.8" stroke-dasharray="0.01,3" stroke-linecap="round" stroke-linejoin="round"/>
<polyline points="405.9,472.1 456.5,467.0" fill="none" stroke="#8a0808" stroke-width="1.8" stroke-dasharray="0.01,3" stroke-linecap="round" stroke-linejoin="round"/>
<circle cx="374.3" cy="430.4" r="1.7" fill="#18b0f0"/>
<circle cx="402.1" cy="443.6" r="1.7" fill="#18b0f0"/>
<circle cx="429.9" cy="445.5" r="1.7" fill="#18b0f0"/>
<circle cx="402.1" cy="472.1" r="1.7" fill="#18b0f0"/>
<circle cx="374.3" cy="471.5" r="1.7" fill="#18b0f0"/>
<circle cx="374.3" cy="455.7" r="1.7" fill="#6e6e6e"/>
<circle cx="429.9" cy="441.1" r="1.7" fill="#6e6e6e"/>
<circle cx="402.1" cy="450.6" r="1.7" fill="#6e6e6e"/>
<circle cx="457.8" cy="458.8" r="1.7" fill="#108040"/>
<circle cx="374.3" cy="442.4" r="1.7" fill="#f08418"/>
<circle cx="402.1" cy="437.9" r="1.7" fill="#f08418"/>
<circle cx="457.8" cy="429.1" r="1.7" fill="#18b0f0"/>
<circle cx="457.8" cy="463.9" r="1.7" fill="#f01414"/>
<circle cx="624.4" cy="352.3" r="1.7" fill="#6e6e6e"/>
<circle cx="734.5" cy="322.1" r="1.7" fill="#6e6e6e"/>
<circle cx="791.4" cy="328.8" r="1.7" fill="#6e6e6e"/>
<circle cx="846.4" cy="331.0" r="1.7" fill="#6e6e6e"/>
<circle cx="929.9" cy="359.8" r="1.7" fill="#6e6e6e"/>
<circle cx="902.0" cy="419.8" r="1.7" fill="#f01414"/>
<circle cx="957.4" cy="407.4" r="1.7" fill="#f01414"/>
<circle cx="902.0" cy="386.5" r="1.7" fill="#f0f000"/>
<circle cx="846.0" cy="378.0" r="1.7" fill="#1e6cf0"/>
<circle cx="595.5" cy="376.3" r="2.35" fill="none" stroke="#f08418" stroke-width="1"/>
<circle cx="930.0" cy="408.7" r="2.35" fill="none" stroke="#108040" stroke-width="1"/>
<circle cx="763.0" cy="347.5" r="2.35" fill="none" stroke="#f0f000" stroke-width="1"/>
<polyline points="842.0,388.7 873.0,371.0 886.4,366.5" fill="none" stroke="#f08418" stroke-width="1.4449999999999998" opacity="1" stroke-linejoin="round"/>
<circle cx="842.0" cy="388.7" r="1.08" fill="#f08418"/>
<circle cx="873.0" cy="371.0" r="1.08" fill="#f08418"/>
<circle cx="886.4" cy="366.5" r="1.08" fill="#f08418"/>
<polyline points="846.4,406.5 873.0,384.3" fill="none" stroke="#f08418" stroke-width="1.4449999999999998" opacity="1" stroke-linejoin="round"/>
<circle cx="846.4" cy="406.5" r="1.08" fill="#f08418"/>
<circle cx="873.0" cy="384.3" r="1.08" fill="#f08418"/>
<polyline points="346.0,434.0 600.0,415.0 900.0,393.0 1040.0,382.0 1200.0,370.0 1457.0,350.0 1512.0,335.0" fill="none" stroke="#f0f0f0" stroke-width="2" stroke-dasharray="5,3" opacity="1" stroke-linejoin="round"/>
<polyline points="346.0,468.0 600.0,435.0 900.0,399.0 1096.0,375.0 1401.0,269.0 1512.0,123.0" fill="none" stroke="#f0f000" stroke-width="2" stroke-dasharray="5,3" opacity="1" stroke-linejoin="round"/>
<polyline points="346.0,471.0 600.0,428.0 900.0,379.0 955.0,370.0 1104.0,308.0 1234.0,255.6 1355.0,97.0" fill="none" stroke="#f03030" stroke-width="2" stroke-dasharray="5,3" opacity="1" stroke-linejoin="round"/>
</svg>
<div class="t" style="left:262px;width:50px;text-align:right;top:93.5px;font-size:9px;color:#e0e0e0">+5.00</div>
<div class="t" style="left:262px;width:50px;text-align:right;top:131.0px;font-size:9px;color:#e0e0e0">+4.50</div>
<div class="t" style="left:262px;width:50px;text-align:right;top:168.5px;font-size:9px;color:#e0e0e0">+4.00</div>
<div class="t" style="left:262px;width:50px;text-align:right;top:206.0px;font-size:9px;color:#e0e0e0">+3.50</div>
<div class="t" style="left:262px;width:50px;text-align:right;top:243.5px;font-size:9px;color:#e0e0e0">+3.00</div>
<div class="t" style="left:262px;width:50px;text-align:right;top:281.0px;font-size:9px;color:#e0e0e0">+2.50</div>
<div class="t" style="left:262px;width:50px;text-align:right;top:318.5px;font-size:9px;color:#e0e0e0">+2.00</div>
<div class="t" style="left:262px;width:50px;text-align:right;top:356.0px;font-size:9px;color:#e0e0e0">+1.50</div>
<div class="t" style="left:262px;width:50px;text-align:right;top:393.5px;font-size:9px;color:#e0e0e0">+1.00</div>
<div class="t" style="left:262px;width:50px;text-align:right;top:431.0px;font-size:9px;color:#e0e0e0">+0.50</div>
<div class="t" style="left:262px;width:50px;text-align:right;top:468.5px;font-size:9px;color:#e0e0e0">-0.00</div>
<div class="t" style="left:437.5px;width:40px;text-align:center;top:500px;font-size:9px;color:#e0e0e0">L5</div>
<div class="t" style="left:576.2px;width:40px;text-align:center;top:500px;font-size:9px;color:#e0e0e0">L10</div>
<div class="t" style="left:714.9px;width:40px;text-align:center;top:500px;font-size:9px;color:#e0e0e0">L15</div>
<div class="t" style="left:853.5px;width:40px;text-align:center;top:500px;font-size:9px;color:#e0e0e0">L20</div>
<div class="t" style="left:992.2px;width:40px;text-align:center;top:500px;font-size:9px;color:#e0e0e0">L25</div>
<div class="t" style="left:1130.9px;width:40px;text-align:center;top:500px;font-size:9px;color:#e0e0e0">L30</div>
<div class="t" style="left:1269.6px;width:40px;text-align:center;top:500px;font-size:9px;color:#e0e0e0">L35</div>
<div class="t" style="left:1408.3px;width:40px;text-align:center;top:500px;font-size:9px;color:#e0e0e0">L40</div>
<svg class="ab" style="left:308px;top:491px" width="24" height="22"><path d="M10.5 1L6.5 8.5H14.5Z" fill="none" stroke="#c8c8c8" stroke-width="1"/><rect x="1.5" y="8.5" width="19" height="11" fill="#000" stroke="#d8d8d8" stroke-width="1"/></svg>
<div class="t" style="left:309px;width:20px;text-align:center;top:501px;font-size:9px;color:#e8e8e8">L0</div>
<div class="t" style="left:1300px;width:203px;text-align:right;top:475px;font-size:11px;font-weight:bold;color:#7a7a7a;letter-spacing:0.05px">Custom Correction : None</div>
<div class="ab" style="left:1517px;top:97px;width:10px;height:394px;background:linear-gradient(90deg,#7a7a7a,#8a8a8a 60%,#707070);border:1px solid #cfcfcf;border-radius:2px"></div>
<div class="ab" style="left:271px;top:514.5px;width:1257px;height:3.5px;background:linear-gradient(#a0a0a0 0,#a0a0a0 30%,#505050 30%,#505050 60%,#7a7a7a 60%);border-radius:2px"></div>
<svg class="ab" style="left:1515px;top:507px" width="14" height="9"><path d="M7 1L2 8H12Z" fill="#222" stroke="#cfcfcf" stroke-width="1"/></svg>
<div class="ab" style="left:366px;top:522px;width:1140px;height:240px;background:#000;border-left:1px solid #8a8a8a;border-right:1px solid #8a8a8a"></div>
<div class="ab" style="left:366px;top:522px;width:1140px;height:14px;background:#9e9e9e"></div>
<div class="ab" style="left:875.5px;top:536px;width:1px;height:240px;background:#7a7a7a"></div>
<div class="ab" style="left:1461.5px;top:536px;width:1px;height:240px;background:#7a7a7a"></div>
<div class="ab" style="left:875.5px;top:522px;width:1px;height:14px;background:#a8a8a8"></div>
<div class="ab" style="left:1461.5px;top:522px;width:1px;height:14px;background:#a8a8a8"></div>
<div class="t" style="left:419px;width:80px;text-align:center;top:523.5px;font-size:10.5px;font-weight:bold;color:#1e1e1e">Run</div>
<div class="t" style="left:552.5px;width:80px;text-align:center;top:523.5px;font-size:10.5px;font-weight:bold;color:#1e1e1e">Laps</div>
<div class="t" style="left:646px;width:80px;text-align:center;top:523.5px;font-size:10.5px;font-weight:bold;color:#1e1e1e">Tyre</div>
<div class="t" style="left:731.8px;width:80px;text-align:center;top:523.5px;font-size:10.5px;font-weight:bold;color:#1e1e1e">Age</div>
<div class="t" style="left:802px;width:80px;text-align:center;top:523.5px;font-size:10.5px;font-weight:bold;color:#1e1e1e">Fuel</div>
<div class="t" style="left:891.4px;width:80px;text-align:center;top:523.5px;font-size:10.5px;font-weight:bold;color:#1e1e1e">BLT</div>
<div class="t" style="left:1000px;width:80px;text-align:center;top:523.5px;font-size:10.5px;font-weight:bold;color:#1e1e1e">I/cept</div>
<div class="t" style="left:1097px;width:80px;text-align:center;top:523.5px;font-size:10.5px;font-weight:bold;color:#1e1e1e">L1-L2</div>
<div class="t" style="left:1194.8px;width:80px;text-align:center;top:523.5px;font-size:10.5px;font-weight:bold;color:#1e1e1e">MidSt</div>
<div class="t" style="left:1292.2px;width:80px;text-align:center;top:523.5px;font-size:10.5px;font-weight:bold;color:#1e1e1e">Deg/L</div>
<div class="t" style="left:1378.5px;width:80px;text-align:center;top:523.5px;font-size:10.5px;font-weight:bold;color:#1e1e1e">Fit</div>
<div class="t" style="left:419px;width:80px;text-align:center;top:539.5px;font-size:11px;font-weight:bold;color:#f4f4f4">R1 : L1-28</div>
<div class="t" style="left:552.5px;width:80px;text-align:center;top:539.5px;font-size:11px;font-weight:bold;color:#f4f4f4">28</div>
<div class="t" style="left:646px;width:80px;text-align:center;top:539.5px;font-size:11px;font-weight:bold;color:#f4f4f4">SU</div>
<div class="t" style="left:731.8px;width:80px;text-align:center;top:539.5px;font-size:11px;font-weight:bold;color:#f4f4f4">0.0</div>
<div class="t" style="left:802px;width:80px;text-align:center;top:539.5px;font-size:11px;font-weight:bold;color:#f4f4f4">109.56</div>
<div class="t" style="left:891.4px;width:80px;text-align:center;top:539.5px;font-size:11px;font-weight:bold;color:#f4f4f4">1:19.424</div>
<div class="t" style="left:1000px;width:80px;text-align:center;top:539.5px;font-size:11px;font-weight:bold;color:#f4f4f4">1:19.444</div>
<div class="t" style="left:1097px;width:80px;text-align:center;top:539.5px;font-size:11px;font-weight:bold;color:#f4f4f4">+0.236s</div>
<div class="t" style="left:1194.8px;width:80px;text-align:center;top:539.5px;font-size:11px;font-weight:bold;color:#f4f4f4">1:20.130</div>
<div class="t" style="left:1292.2px;width:80px;text-align:center;top:539.5px;font-size:11px;font-weight:bold;color:#f4f4f4">0.069s</div>
<div class="t" style="left:1378.5px;width:80px;text-align:center;top:539.5px;font-size:11px;font-weight:bold;color:#f4f4f4">98.4%</div>
<div class="ab" style="left:1478px;top:538.0px;width:13px;height:13px;border:1px solid #d8d8d8;background:#000"></div>
<svg class="ab" style="left:1478px;top:538.0px" width="13" height="13"><path d="M2.8 6.6L5.2 9.8L10.4 2.2" stroke="#fafafa" stroke-width="2" fill="none" stroke-linecap="round"/></svg>
<div class="t" style="left:419px;width:80px;text-align:center;top:554.9px;font-size:11px;font-weight:bold;color:#f4f4f4">R2 : L29-42</div>
<div class="t" style="left:552.5px;width:80px;text-align:center;top:554.9px;font-size:11px;font-weight:bold;color:#f4f4f4">14</div>
<div class="t" style="left:646px;width:80px;text-align:center;top:554.9px;font-size:11px;font-weight:bold;color:#f4f4f4">MN</div>
<div class="t" style="left:731.8px;width:80px;text-align:center;top:554.9px;font-size:11px;font-weight:bold;color:#f4f4f4">0.0</div>
<div class="t" style="left:802px;width:80px;text-align:center;top:554.9px;font-size:11px;font-weight:bold;color:#f4f4f4">63.08</div>
<div class="t" style="left:891.4px;width:80px;text-align:center;top:554.9px;font-size:11px;font-weight:bold;color:#f4f4f4">1:19.196</div>
<div class="t" style="left:1000px;width:80px;text-align:center;top:554.9px;font-size:11px;font-weight:bold;color:#f4f4f4">1:19.031</div>
<div class="t" style="left:1097px;width:80px;text-align:center;top:554.9px;font-size:11px;font-weight:bold;color:#f4f4f4">-0.016s</div>
<div class="t" style="left:1194.8px;width:80px;text-align:center;top:554.9px;font-size:11px;font-weight:bold;color:#f4f4f4">1:20.002</div>
<div class="t" style="left:1292.2px;width:80px;text-align:center;top:554.9px;font-size:11px;font-weight:bold;color:#f4f4f4">0.097s</div>
<div class="t" style="left:1378.5px;width:80px;text-align:center;top:554.9px;font-size:11px;font-weight:bold;color:#f4f4f4">99.5%</div>
<div class="ab" style="left:1478px;top:553.4px;width:13px;height:13px;border:1px solid #d8d8d8;background:#000"></div>
<svg class="ab" style="left:1478px;top:553.4px" width="13" height="13"><path d="M2.8 6.6L5.2 9.8L10.4 2.2" stroke="#fafafa" stroke-width="2" fill="none" stroke-linecap="round"/></svg>
<div class="t" style="left:419px;width:80px;text-align:center;top:570.2px;font-size:11px;font-weight:bold;color:#f4f4f4">R3 : L43-66</div>
<div class="t" style="left:552.5px;width:80px;text-align:center;top:570.2px;font-size:11px;font-weight:bold;color:#f4f4f4">24</div>
<div class="t" style="left:646px;width:80px;text-align:center;top:570.2px;font-size:11px;font-weight:bold;color:#f4f4f4">MU</div>
<div class="t" style="left:731.8px;width:80px;text-align:center;top:570.2px;font-size:11px;font-weight:bold;color:#f4f4f4">0.0</div>
<div class="t" style="left:802px;width:80px;text-align:center;top:570.2px;font-size:11px;font-weight:bold;color:#f4f4f4">39.84</div>
<div class="t" style="left:891.4px;width:80px;text-align:center;top:570.2px;font-size:11px;font-weight:bold;color:#f4f4f4">1:19.492</div>
<div class="t" style="left:1000px;width:80px;text-align:center;top:570.2px;font-size:11px;font-weight:bold;color:#f4f4f4">1:19.011</div>
<div class="t" style="left:1097px;width:80px;text-align:center;top:570.2px;font-size:11px;font-weight:bold;color:#f4f4f4">+0.009s</div>
<div class="t" style="left:1194.8px;width:80px;text-align:center;top:570.2px;font-size:11px;font-weight:bold;color:#f4f4f4">1:20.086</div>
<div class="t" style="left:1292.2px;width:80px;text-align:center;top:570.2px;font-size:11px;font-weight:bold;color:#f4f4f4">0.108s</div>
<div class="t" style="left:1378.5px;width:80px;text-align:center;top:570.2px;font-size:11px;font-weight:bold;color:#f4f4f4">91.3%</div>
<div class="ab" style="left:1478px;top:568.7px;width:13px;height:13px;border:1px solid #d8d8d8;background:#000"></div>
<svg class="ab" style="left:1478px;top:568.7px" width="13" height="13"><path d="M2.8 6.6L5.2 9.8L10.4 2.2" stroke="#fafafa" stroke-width="2" fill="none" stroke-linecap="round"/></svg>
<div class="t" style="left:419px;width:80px;text-align:center;top:585.5px;font-size:11px;font-weight:bold;color:#f4f4f4">R1 : L1-23</div>
<div class="t" style="left:552.5px;width:80px;text-align:center;top:585.5px;font-size:11px;font-weight:bold;color:#f4f4f4">23</div>
<div class="t" style="left:646px;width:80px;text-align:center;top:585.5px;font-size:11px;font-weight:bold;color:#f4f4f4">SU</div>
<div class="t" style="left:731.8px;width:80px;text-align:center;top:585.5px;font-size:11px;font-weight:bold;color:#f4f4f4">0.0</div>
<div class="t" style="left:802px;width:80px;text-align:center;top:585.5px;font-size:11px;font-weight:bold;color:#f4f4f4">109.56</div>
<div class="t" style="left:891.4px;width:80px;text-align:center;top:585.5px;font-size:11px;font-weight:bold;color:#f4f4f4">1:20.400</div>
<div class="t" style="left:1000px;width:80px;text-align:center;top:585.5px;font-size:11px;font-weight:bold;color:#f4f4f4">1:20.275</div>
<div class="t" style="left:1097px;width:80px;text-align:center;top:585.5px;font-size:11px;font-weight:bold;color:#f4f4f4">+0.150s</div>
<div class="t" style="left:1194.8px;width:80px;text-align:center;top:585.5px;font-size:11px;font-weight:bold;color:#f4f4f4">1:20.937</div>
<div class="t" style="left:1292.2px;width:80px;text-align:center;top:585.5px;font-size:11px;font-weight:bold;color:#f4f4f4">0.066s</div>
<div class="t" style="left:1378.5px;width:80px;text-align:center;top:585.5px;font-size:11px;font-weight:bold;color:#f4f4f4">98.2%</div>
<div class="ab" style="left:1478px;top:584.0px;width:13px;height:13px;border:1px solid #d8d8d8;background:#000"></div>
<svg class="ab" style="left:1478px;top:584.0px" width="13" height="13"><path d="M2.8 6.6L5.2 9.8L10.4 2.2" stroke="#fafafa" stroke-width="2" fill="none" stroke-linecap="round"/></svg>
<div class="t" style="left:419px;width:80px;text-align:center;top:600.9px;font-size:11px;font-weight:bold;color:#f4f4f4">R2 : L24-53</div>
<div class="t" style="left:552.5px;width:80px;text-align:center;top:600.9px;font-size:11px;font-weight:bold;color:#f4f4f4">30</div>
<div class="t" style="left:646px;width:80px;text-align:center;top:600.9px;font-size:11px;font-weight:bold;color:#f4f4f4">MN</div>
<div class="t" style="left:731.8px;width:80px;text-align:center;top:600.9px;font-size:11px;font-weight:bold;color:#f4f4f4">0.0</div>
<div class="t" style="left:802px;width:80px;text-align:center;top:600.9px;font-size:11px;font-weight:bold;color:#f4f4f4">71.38</div>
<div class="t" style="left:891.4px;width:80px;text-align:center;top:600.9px;font-size:11px;font-weight:bold;color:#f4f4f4">1:19.622</div>
<div class="t" style="left:1000px;width:80px;text-align:center;top:600.9px;font-size:11px;font-weight:bold;color:#f4f4f4">1:19.638</div>
<div class="t" style="left:1097px;width:80px;text-align:center;top:600.9px;font-size:11px;font-weight:bold;color:#f4f4f4">+0.508s</div>
<div class="t" style="left:1194.8px;width:80px;text-align:center;top:600.9px;font-size:11px;font-weight:bold;color:#f4f4f4">1:20.202</div>
<div class="t" style="left:1292.2px;width:80px;text-align:center;top:600.9px;font-size:11px;font-weight:bold;color:#f4f4f4">0.056s</div>
<div class="t" style="left:1378.5px;width:80px;text-align:center;top:600.9px;font-size:11px;font-weight:bold;color:#f4f4f4">84.6%</div>
<div class="ab" style="left:1478px;top:599.4px;width:13px;height:13px;border:1px solid #d8d8d8;background:#000"></div>
<svg class="ab" style="left:1478px;top:599.4px" width="13" height="13"><path d="M2.8 6.6L5.2 9.8L10.4 2.2" stroke="#fafafa" stroke-width="2" fill="none" stroke-linecap="round"/></svg>
<div class="t" style="left:419px;width:80px;text-align:center;top:616.2px;font-size:11px;font-weight:bold;color:#f4f4f4">R3 : L54-66</div>
<div class="t" style="left:552.5px;width:80px;text-align:center;top:616.2px;font-size:11px;font-weight:bold;color:#f4f4f4">13</div>
<div class="t" style="left:646px;width:80px;text-align:center;top:616.2px;font-size:11px;font-weight:bold;color:#f4f4f4">SU</div>
<div class="t" style="left:731.8px;width:80px;text-align:center;top:616.2px;font-size:11px;font-weight:bold;color:#f4f4f4">0.0</div>
<div class="t" style="left:802px;width:80px;text-align:center;top:616.2px;font-size:11px;font-weight:bold;color:#f4f4f4">21.58</div>
<div class="t" style="left:891.4px;width:80px;text-align:center;top:616.2px;font-size:11px;font-weight:bold;color:#f4f4f4">1:19.318</div>
<div class="t" style="left:1000px;width:80px;text-align:center;top:616.8px;font-size:9px;color:#d8d8d8">--:--.---</div>
<div class="t" style="left:1097px;width:80px;text-align:center;top:616.8px;font-size:9px;color:#d8d8d8">-.---</div>
<div class="t" style="left:1194.8px;width:80px;text-align:center;top:616.8px;font-size:9px;color:#d8d8d8">--:--.---</div>
<div class="t" style="left:1292.2px;width:80px;text-align:center;top:616.2px;font-size:11px;font-weight:bold;color:#f4f4f4">0.000s</div>
<div class="t" style="left:1378.5px;width:80px;text-align:center;top:616.2px;font-size:11px;font-weight:bold;color:#f4f4f4">0.0%</div>
<div class="ab" style="left:1478px;top:614.8px;width:13px;height:13px;border:1px solid #d8d8d8;background:#000"></div>
<svg class="ab" style="left:1478px;top:614.8px" width="13" height="13"><path d="M2.8 6.6L5.2 9.8L10.4 2.2" stroke="#fafafa" stroke-width="2" fill="none" stroke-linecap="round"/></svg>
<div class="t" style="left:419px;width:80px;text-align:center;top:631.6px;font-size:11px;font-weight:bold;color:#f4f4f4">R1 : L1-27</div>
<div class="t" style="left:552.5px;width:80px;text-align:center;top:631.6px;font-size:11px;font-weight:bold;color:#f4f4f4">27</div>
<div class="t" style="left:646px;width:80px;text-align:center;top:631.6px;font-size:11px;font-weight:bold;color:#f4f4f4">SU</div>
<div class="t" style="left:731.8px;width:80px;text-align:center;top:631.6px;font-size:11px;font-weight:bold;color:#f4f4f4">0.0</div>
<div class="t" style="left:802px;width:80px;text-align:center;top:631.6px;font-size:11px;font-weight:bold;color:#f4f4f4">109.56</div>
<div class="t" style="left:891.4px;width:80px;text-align:center;top:631.6px;font-size:11px;font-weight:bold;color:#f4f4f4">1:20.609</div>
<div class="t" style="left:1000px;width:80px;text-align:center;top:631.6px;font-size:11px;font-weight:bold;color:#f4f4f4">1:20.683</div>
<div class="t" style="left:1097px;width:80px;text-align:center;top:631.6px;font-size:11px;font-weight:bold;color:#f4f4f4">+0.350s</div>
<div class="t" style="left:1194.8px;width:80px;text-align:center;top:631.6px;font-size:11px;font-weight:bold;color:#f4f4f4">1:20.987</div>
<div class="t" style="left:1292.2px;width:80px;text-align:center;top:631.6px;font-size:11px;font-weight:bold;color:#f4f4f4">0.030s</div>
<div class="t" style="left:1378.5px;width:80px;text-align:center;top:631.6px;font-size:11px;font-weight:bold;color:#f4f4f4">98.3%</div>
<div class="ab" style="left:1478px;top:630.1px;width:13px;height:13px;border:1px solid #d8d8d8;background:#000"></div>
<svg class="ab" style="left:1478px;top:630.1px" width="13" height="13"><path d="M2.8 6.6L5.2 9.8L10.4 2.2" stroke="#fafafa" stroke-width="2" fill="none" stroke-linecap="round"/></svg>
<div class="t" style="left:419px;width:80px;text-align:center;top:647.0px;font-size:11px;font-weight:bold;color:#f4f4f4">R2 : L28-57</div>
<div class="t" style="left:552.5px;width:80px;text-align:center;top:647.0px;font-size:11px;font-weight:bold;color:#f4f4f4">30</div>
<div class="t" style="left:646px;width:80px;text-align:center;top:647.0px;font-size:11px;font-weight:bold;color:#f4f4f4">MN</div>
<div class="t" style="left:731.8px;width:80px;text-align:center;top:647.0px;font-size:11px;font-weight:bold;color:#f4f4f4">0.0</div>
<div class="t" style="left:802px;width:80px;text-align:center;top:647.0px;font-size:11px;font-weight:bold;color:#f4f4f4">64.74</div>
<div class="t" style="left:891.4px;width:80px;text-align:center;top:647.0px;font-size:11px;font-weight:bold;color:#f4f4f4">1:19.843</div>
<div class="t" style="left:1000px;width:80px;text-align:center;top:647.0px;font-size:11px;font-weight:bold;color:#f4f4f4">1:19.598</div>
<div class="t" style="left:1097px;width:80px;text-align:center;top:647.0px;font-size:11px;font-weight:bold;color:#f4f4f4">+0.235s</div>
<div class="t" style="left:1194.8px;width:80px;text-align:center;top:647.0px;font-size:11px;font-weight:bold;color:#f4f4f4">1:20.423</div>
<div class="t" style="left:1292.2px;width:80px;text-align:center;top:647.0px;font-size:11px;font-weight:bold;color:#f4f4f4">0.083s</div>
<div class="t" style="left:1378.5px;width:80px;text-align:center;top:647.0px;font-size:11px;font-weight:bold;color:#f4f4f4">89.0%</div>
<div class="ab" style="left:1478px;top:645.5px;width:13px;height:13px;border:1px solid #d8d8d8;background:#000"></div>
<svg class="ab" style="left:1478px;top:645.5px" width="13" height="13"><path d="M2.8 6.6L5.2 9.8L10.4 2.2" stroke="#fafafa" stroke-width="2" fill="none" stroke-linecap="round"/></svg>
<div class="t" style="left:419px;width:80px;text-align:center;top:662.3px;font-size:11px;font-weight:bold;color:#f4f4f4">R1 : L1-24</div>
<div class="t" style="left:552.5px;width:80px;text-align:center;top:662.3px;font-size:11px;font-weight:bold;color:#f4f4f4">24</div>
<div class="t" style="left:646px;width:80px;text-align:center;top:662.3px;font-size:11px;font-weight:bold;color:#f4f4f4">SU</div>
<div class="t" style="left:731.8px;width:80px;text-align:center;top:662.3px;font-size:11px;font-weight:bold;color:#f4f4f4">0.0</div>
<div class="t" style="left:802px;width:80px;text-align:center;top:662.3px;font-size:11px;font-weight:bold;color:#f4f4f4">109.56</div>
<div class="t" style="left:891.4px;width:80px;text-align:center;top:662.3px;font-size:11px;font-weight:bold;color:#f4f4f4">1:19.680</div>
<div class="t" style="left:1000px;width:80px;text-align:center;top:662.3px;font-size:11px;font-weight:bold;color:#f4f4f4">1:19.361</div>
<div class="t" style="left:1097px;width:80px;text-align:center;top:662.3px;font-size:11px;font-weight:bold;color:#f4f4f4">+0.015s</div>
<div class="t" style="left:1194.8px;width:80px;text-align:center;top:662.3px;font-size:11px;font-weight:bold;color:#f4f4f4">1:20.167</div>
<div class="t" style="left:1292.2px;width:80px;text-align:center;top:662.3px;font-size:11px;font-weight:bold;color:#f4f4f4">0.081s</div>
<div class="t" style="left:1378.5px;width:80px;text-align:center;top:662.3px;font-size:11px;font-weight:bold;color:#f4f4f4">98.3%</div>
<div class="ab" style="left:1478px;top:660.8px;width:13px;height:13px;border:1px solid #d8d8d8;background:#000"></div>
<svg class="ab" style="left:1478px;top:660.8px" width="13" height="13"><path d="M2.8 6.6L5.2 9.8L10.4 2.2" stroke="#fafafa" stroke-width="2" fill="none" stroke-linecap="round"/></svg>
<div class="t" style="left:419px;width:80px;text-align:center;top:677.6px;font-size:11px;font-weight:bold;color:#f4f4f4">R2 : L25-60</div>
<div class="t" style="left:552.5px;width:80px;text-align:center;top:677.6px;font-size:11px;font-weight:bold;color:#f4f4f4">36</div>
<div class="t" style="left:646px;width:80px;text-align:center;top:677.6px;font-size:11px;font-weight:bold;color:#f4f4f4">MN</div>
<div class="t" style="left:731.8px;width:80px;text-align:center;top:677.6px;font-size:11px;font-weight:bold;color:#f4f4f4">0.0</div>
<div class="t" style="left:802px;width:80px;text-align:center;top:677.6px;font-size:11px;font-weight:bold;color:#f4f4f4">69.72</div>
<div class="t" style="left:891.4px;width:80px;text-align:center;top:677.6px;font-size:11px;font-weight:bold;color:#f4f4f4">1:19.124</div>
<div class="t" style="left:1000px;width:80px;text-align:center;top:677.6px;font-size:11px;font-weight:bold;color:#f4f4f4">1:19.483</div>
<div class="t" style="left:1097px;width:80px;text-align:center;top:677.6px;font-size:11px;font-weight:bold;color:#f4f4f4">+0.816s</div>
<div class="t" style="left:1194.8px;width:80px;text-align:center;top:677.6px;font-size:11px;font-weight:bold;color:#f4f4f4">1:20.178</div>
<div class="t" style="left:1292.2px;width:80px;text-align:center;top:677.6px;font-size:11px;font-weight:bold;color:#f4f4f4">0.070s</div>
<div class="t" style="left:1378.5px;width:80px;text-align:center;top:677.6px;font-size:11px;font-weight:bold;color:#f4f4f4">83.7%</div>
<div class="ab" style="left:1478px;top:676.1px;width:13px;height:13px;border:1px solid #d8d8d8;background:#000"></div>
<div class="t" style="left:419px;width:80px;text-align:center;top:693.0px;font-size:11px;font-weight:bold;color:#f4f4f4">R1 : L1-25</div>
<div class="t" style="left:552.5px;width:80px;text-align:center;top:693.0px;font-size:11px;font-weight:bold;color:#f4f4f4">25</div>
<div class="t" style="left:646px;width:80px;text-align:center;top:693.0px;font-size:11px;font-weight:bold;color:#f4f4f4">SU</div>
<div class="t" style="left:731.8px;width:80px;text-align:center;top:693.0px;font-size:11px;font-weight:bold;color:#f4f4f4">0.0</div>
<div class="t" style="left:802px;width:80px;text-align:center;top:693.0px;font-size:11px;font-weight:bold;color:#f4f4f4">109.56</div>
<div class="t" style="left:891.4px;width:80px;text-align:center;top:693.0px;font-size:11px;font-weight:bold;color:#f4f4f4">1:20.865</div>
<div class="t" style="left:1000px;width:80px;text-align:center;top:693.0px;font-size:11px;font-weight:bold;color:#f4f4f4">1:21.052</div>
<div class="t" style="left:1097px;width:80px;text-align:center;top:693.0px;font-size:11px;font-weight:bold;color:#f4f4f4">+0.665s</div>
<div class="t" style="left:1194.8px;width:80px;text-align:center;top:693.0px;font-size:11px;font-weight:bold;color:#f4f4f4">1:21.704</div>
<div class="t" style="left:1292.2px;width:80px;text-align:center;top:693.0px;font-size:11px;font-weight:bold;color:#f4f4f4">0.065s</div>
<div class="t" style="left:1378.5px;width:80px;text-align:center;top:693.0px;font-size:11px;font-weight:bold;color:#f4f4f4">97.5%</div>
<div class="ab" style="left:1478px;top:691.5px;width:13px;height:13px;border:1px solid #d8d8d8;background:#000"></div>
<svg class="ab" style="left:1478px;top:691.5px" width="13" height="13"><path d="M2.8 6.6L5.2 9.8L10.4 2.2" stroke="#fafafa" stroke-width="2" fill="none" stroke-linecap="round"/></svg>
<div class="t" style="left:419px;width:80px;text-align:center;top:708.4px;font-size:11px;font-weight:bold;color:#f4f4f4">R2 : L26-46</div>
<div class="t" style="left:552.5px;width:80px;text-align:center;top:708.4px;font-size:11px;font-weight:bold;color:#f4f4f4">21</div>
<div class="t" style="left:646px;width:80px;text-align:center;top:708.4px;font-size:11px;font-weight:bold;color:#f4f4f4">MN</div>
<div class="t" style="left:731.8px;width:80px;text-align:center;top:708.4px;font-size:11px;font-weight:bold;color:#f4f4f4">0.0</div>
<div class="t" style="left:802px;width:80px;text-align:center;top:708.4px;font-size:11px;font-weight:bold;color:#f4f4f4">68.06</div>
<div class="t" style="left:891.4px;width:80px;text-align:center;top:708.4px;font-size:11px;font-weight:bold;color:#f4f4f4">1:20.842</div>
<div class="t" style="left:1000px;width:80px;text-align:center;top:708.4px;font-size:11px;font-weight:bold;color:#f4f4f4">1:20.777</div>
<div class="t" style="left:1097px;width:80px;text-align:center;top:708.4px;font-size:11px;font-weight:bold;color:#f4f4f4">+0.639s</div>
<div class="t" style="left:1194.8px;width:80px;text-align:center;top:708.4px;font-size:11px;font-weight:bold;color:#f4f4f4">1:21.350</div>
<div class="t" style="left:1292.2px;width:80px;text-align:center;top:708.4px;font-size:11px;font-weight:bold;color:#f4f4f4">0.057s</div>
<div class="t" style="left:1378.5px;width:80px;text-align:center;top:708.4px;font-size:11px;font-weight:bold;color:#f4f4f4">95.6%</div>
<div class="ab" style="left:1478px;top:706.9px;width:13px;height:13px;border:1px solid #d8d8d8;background:#000"></div>
<svg class="ab" style="left:1478px;top:706.9px" width="13" height="13"><path d="M2.8 6.6L5.2 9.8L10.4 2.2" stroke="#fafafa" stroke-width="2" fill="none" stroke-linecap="round"/></svg>
<div class="t" style="left:419px;width:80px;text-align:center;top:723.7px;font-size:11px;font-weight:bold;color:#f4f4f4">R3 : L47-66</div>
<div class="t" style="left:552.5px;width:80px;text-align:center;top:723.7px;font-size:11px;font-weight:bold;color:#f4f4f4">20</div>
<div class="t" style="left:646px;width:80px;text-align:center;top:723.7px;font-size:11px;font-weight:bold;color:#f4f4f4">SU</div>
<div class="t" style="left:731.8px;width:80px;text-align:center;top:723.7px;font-size:11px;font-weight:bold;color:#f4f4f4">0.0</div>
<div class="t" style="left:802px;width:80px;text-align:center;top:723.7px;font-size:11px;font-weight:bold;color:#f4f4f4">33.20</div>
<div class="t" style="left:891.4px;width:80px;text-align:center;top:723.7px;font-size:11px;font-weight:bold;color:#f4f4f4">1:21.302</div>
<div class="t" style="left:1000px;width:80px;text-align:center;top:723.7px;font-size:11px;font-weight:bold;color:#f4f4f4">1:21.199</div>
<div class="t" style="left:1097px;width:80px;text-align:center;top:723.7px;font-size:11px;font-weight:bold;color:#f4f4f4">-0.218s</div>
<div class="t" style="left:1194.8px;width:80px;text-align:center;top:723.7px;font-size:11px;font-weight:bold;color:#f4f4f4">1:21.827</div>
<div class="t" style="left:1292.2px;width:80px;text-align:center;top:723.7px;font-size:11px;font-weight:bold;color:#f4f4f4">0.063s</div>
<div class="t" style="left:1378.5px;width:80px;text-align:center;top:723.7px;font-size:11px;font-weight:bold;color:#f4f4f4">96.7%</div>
<div class="ab" style="left:1478px;top:722.2px;width:13px;height:13px;border:1px solid #d8d8d8;background:#000"></div>
<svg class="ab" style="left:1478px;top:722.2px" width="13" height="13"><path d="M2.8 6.6L5.2 9.8L10.4 2.2" stroke="#fafafa" stroke-width="2" fill="none" stroke-linecap="round"/></svg>
<div class="t" style="left:419px;width:80px;text-align:center;top:739.0px;font-size:11px;font-weight:bold;color:#f4f4f4">R1 : L1-23</div>
<div class="t" style="left:552.5px;width:80px;text-align:center;top:739.0px;font-size:11px;font-weight:bold;color:#f4f4f4">23</div>
<div class="t" style="left:646px;width:80px;text-align:center;top:739.0px;font-size:11px;font-weight:bold;color:#f4f4f4">SU</div>
<div class="t" style="left:731.8px;width:80px;text-align:center;top:739.0px;font-size:11px;font-weight:bold;color:#f4f4f4">0.0</div>
<div class="t" style="left:802px;width:80px;text-align:center;top:739.0px;font-size:11px;font-weight:bold;color:#f4f4f4">109.56</div>
<div class="t" style="left:891.4px;width:80px;text-align:center;top:739.0px;font-size:11px;font-weight:bold;color:#f4f4f4">1:21.431</div>
<div class="t" style="left:1000px;width:80px;text-align:center;top:739.0px;font-size:11px;font-weight:bold;color:#f4f4f4">1:21.349</div>
<div class="t" style="left:1097px;width:80px;text-align:center;top:739.0px;font-size:11px;font-weight:bold;color:#f4f4f4">+0.061s</div>
<div class="t" style="left:1194.8px;width:80px;text-align:center;top:739.0px;font-size:11px;font-weight:bold;color:#f4f4f4">1:21.846</div>
<div class="t" style="left:1292.2px;width:80px;text-align:center;top:739.0px;font-size:11px;font-weight:bold;color:#f4f4f4">0.050s</div>
<div class="t" style="left:1378.5px;width:80px;text-align:center;top:739.0px;font-size:11px;font-weight:bold;color:#f4f4f4">95.5%</div>
<div class="ab" style="left:1478px;top:737.5px;width:13px;height:13px;border:1px solid #d8d8d8;background:#000"></div>
<svg class="ab" style="left:1478px;top:737.5px" width="13" height="13"><path d="M2.8 6.6L5.2 9.8L10.4 2.2" stroke="#fafafa" stroke-width="2" fill="none" stroke-linecap="round"/></svg>
<div class="ab" style="left:1506px;top:522px;width:5px;height:229px;background:#000"></div>
<div class="ab" style="left:1511px;top:522px;width:18px;height:235px;background:#161616;border:1px solid #6a6a6a"></div>
<div class="ab" style="left:1512px;top:523px;width:16px;height:15px;background:#1e1e1e;border-bottom:1px solid #5a5a5a"></div>
<svg class="ab" style="left:1514px;top:526px" width="12" height="9"><path d="M6 0.5L11 8H1Z" fill="#c0c0c0"/></svg>
<div class="ab" style="left:1512px;top:538px;width:16px;height:19px;background:linear-gradient(#4a4a4a,#2a2a2a);border-bottom:1px solid #5a5a5a"></div>
<div class="ab" style="left:1515px;top:544px;width:10px;height:1px;background:#151515"></div>
<div class="ab" style="left:1515px;top:547.5px;width:10px;height:1px;background:#151515"></div>
<div class="ab" style="left:1515px;top:551px;width:10px;height:1px;background:#151515"></div>
<div class="ab" style="left:1512px;top:735px;width:16px;height:16px;background:#1e1e1e;border-top:1px solid #5a5a5a"></div>
<svg class="ab" style="left:1514px;top:739px" width="12" height="9"><path d="M6 8.5L11 1H1Z" fill="#9a9a9a"/></svg>
</body></html>
